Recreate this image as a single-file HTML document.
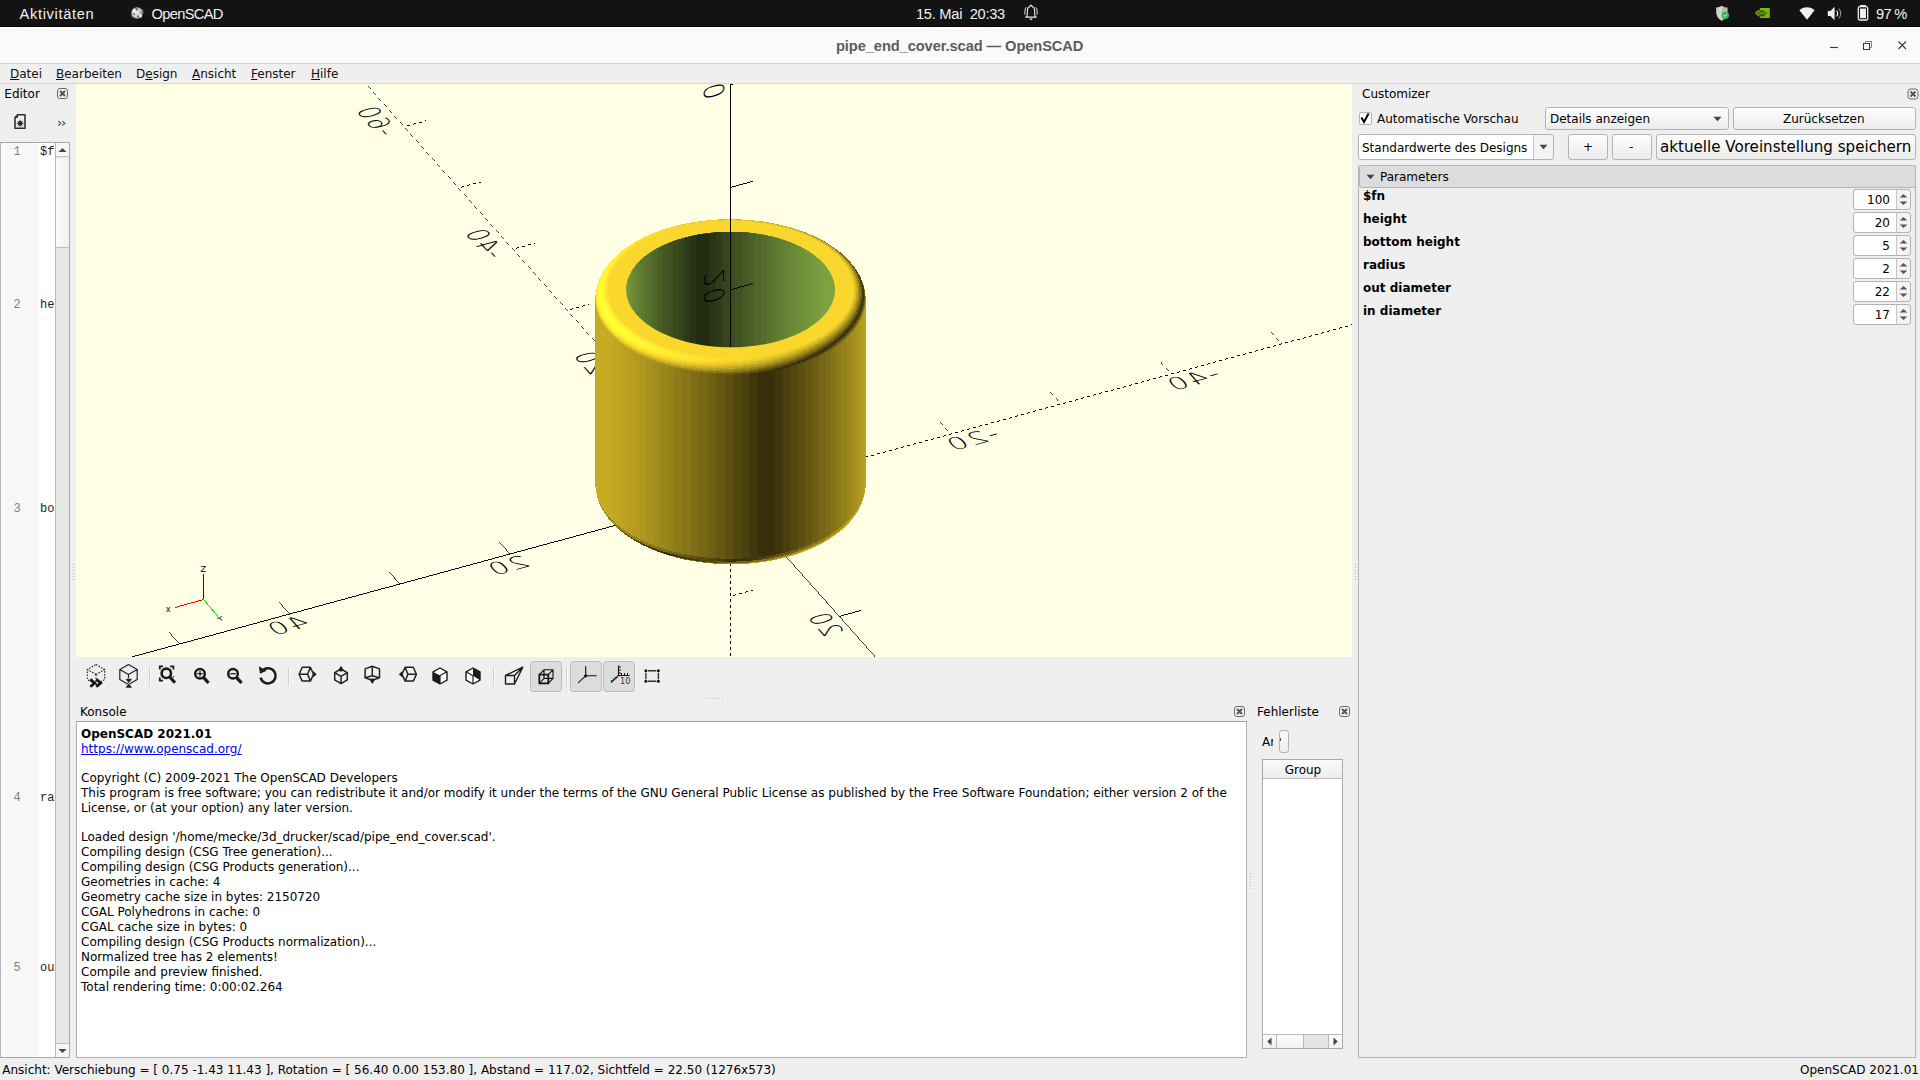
<!DOCTYPE html>
<html lang="de">
<head>
<meta charset="utf-8">
<title>pipe_end_cover.scad — OpenSCAD</title>
<style>
*{box-sizing:border-box;margin:0;padding:0}
html,body{width:1920px;height:1080px;overflow:hidden;background:#efefef;color:#000}
body{position:relative;font-family:"DejaVu Sans","Liberation Sans",sans-serif;font-size:12px}
.abs{position:absolute}
.ub{font-family:"Liberation Sans","DejaVu Sans",sans-serif}
.dv{font-family:"DejaVu Sans","Liberation Sans",sans-serif}
.mono{font-family:"Liberation Mono","DejaVu Sans Mono",monospace}
#topbar{left:0;top:0;width:1920px;height:27px;background:#131313;color:#f2f2f2;border-bottom:1px solid #000}
#titlebar{left:0;top:27px;width:1920px;height:37px;background:#fafafa;border-top:1px solid #fff;border-bottom:1px solid #d4d4d4}
#menubar{left:0;top:64px;width:1920px;height:20px;background:#efefef;border-bottom:1px solid #d6d6d6}
#viewport{left:76px;top:84px;width:1276px;height:573px;background:#ffffe5;overflow:hidden}
#statusbar{left:0;top:1058px;width:1920px;height:22px;background:#efefef}

.t{position:absolute;white-space:pre;line-height:1}
#topbar .t{color:#f0f0f0;font-size:14.67px;top:6.500px}
#titlebar .title{color:#5c5c5c;font-weight:bold;font-size:14.67px;top:11px}
#menubar .t{font-size:12px;top:4px;color:#111;font-family:"DejaVu Sans","Liberation Sans",sans-serif}
#menubar u{text-decoration:underline;text-underline-offset:1px}
.ln{left:12.500px;color:#808080}
.cd{left:39px;color:#1e1e1e}
.btn{border:1px solid #b3b3b3;border-radius:3px;background:linear-gradient(#fdfdfd,#ececec)}
.pl{font-weight:bold;font-size:12px}
.sv{font-size:12px}
.spin{width:58px;height:21px;border:1px solid #b3b3b3;border-radius:3px;background:linear-gradient(90deg,#fff 0,#fff 43px,#f3f3f3 43px,#f3f3f3 100%)}
#tb1{letter-spacing:.66px;transform:translateX(1.5px)}
#tb2{letter-spacing:-.68px;transform:translateX(.5px)}
#tb3{letter-spacing:-.28px}
#tb4{letter-spacing:-.67px}
#ttl{letter-spacing:-.09px}
</style>
</head>
<body>
<div id="topbar" class="abs ub">
<span class="t" id="tb1" style="left:18px">Aktivitäten</span>
<svg class="abs" style="left:129px;top:5px" width="16" height="16" viewBox="0 0 16 16"><defs><radialGradient id="gsph" cx="0.45" cy="0.45" r="0.6"><stop offset="0" stop-color="#e6e6e6"/><stop offset="0.7" stop-color="#c4c4c4"/><stop offset="1" stop-color="#8e8e8e"/></radialGradient></defs><ellipse cx="5.400" cy="10.600" rx="4" ry="2.600" fill="#5a5a5a" opacity=".55"/><ellipse cx="11.400" cy="6.400" rx="3.600" ry="3" fill="#6a6a6a" opacity=".5"/><circle cx="8.100" cy="8" r="5.800" fill="url(#gsph)"/><ellipse cx="7.300" cy="3.900" rx="1.700" ry="1.500" fill="#555" opacity=".8"/><ellipse cx="4.900" cy="8.900" rx="1.200" ry="1.100" fill="#777" opacity=".7"/><ellipse cx="9.400" cy="11.600" rx="1.300" ry="1" fill="#444" opacity=".8"/><ellipse cx="12.300" cy="7.600" rx="1.100" ry="1.600" fill="#888" opacity=".8"/><ellipse cx="11.600" cy="11" rx="1.600" ry="1.700" fill="#fff" opacity=".75"/><ellipse cx="5.400" cy="5.600" rx="1.800" ry="2" fill="#fff" opacity=".7"/></svg>
<span class="t" id="tb2" style="left:151px">OpenSCAD</span>
<span class="t" id="tb3" style="left:916px">15. Mai  20:33</span>
<svg class="abs" style="left:1023px;top:4px" width="16" height="18" viewBox="0 0 16 18"><path d="M8 1.400c-.6 0-1.100.4-1.100 1C5 3 4.300 4.800 4.300 6.900v3.500c0 1-.5 1.900-1.500 2.700h10.400c-1-.8-1.500-1.700-1.500-2.700V6.900c0-2.100-.7-3.900-2.600-4.500 0-.6-.5-1-1.100-1z" fill="none" stroke="#f0f0f0" stroke-width="1.100" stroke-linejoin="round"/><path d="M3.300 3.200C2.300 4.300 1.900 5.600 1.900 7.200v3.600M12.700 3.200c1 1.100 1.400 2.400 1.400 4v3.600" fill="none" stroke="#f0f0f0" stroke-width=".9"/><path d="M6.200 14.600h3.600L8 16.400z" fill="#f0f0f0"/></svg>
<svg class="abs" style="left:1714px;top:5px" width="17" height="17" viewBox="0 0 17 17"><path d="M8 .8c-1.600 1.100-3.400 1.700-5.600 1.800v5c0 3.700 2.200 6.600 5.600 8.200 3.400-1.600 5.600-4.500 5.600-8.200v-5C11.400 2.500 9.600 1.900 8 .8z" fill="#b9b9b9"/><path d="M8 .8v15c-3.400-1.600-5.600-4.500-5.600-8.200v-5C4.600 2.500 6.400 1.900 8 .8z" fill="#d2d2d2"/><circle cx="11.300" cy="10.200" r="3.700" fill="#32b85c"/><path d="M9.600 10.200l1.200 1.200 2.200-2.300" fill="none" stroke="#fff" stroke-width="1"/></svg>
<svg class="abs" style="left:1754px;top:7px" width="17" height="12" viewBox="0 0 17 12"><path d="M6 1h9.800v10H6z" fill="#76b900"/><path d="M1 6C2.800 3.400 5.400 2.300 8.400 2.500L8.400 9.600C5.400 9.900 2.800 8.700 1 6z" fill="#76b900"/><path d="M3.200 6.100C4.400 4.500 6 3.700 8 3.800M8 5c-1.200 0-2.100.5-2.700 1.300.7 1 1.600 1.500 2.700 1.400 1.100-.1 1.900-.6 2.500-1.400M8 3.800c2 .1 3.400 1 4.400 2.600C11.200 8 9.800 8.800 8 8.900 5.900 9 4.300 8 3.200 6.100M8 5c.9.100 1.500.5 2 1.200" fill="none" stroke="#131313" stroke-width=".75"/></svg>
<svg class="abs" style="left:1798px;top:6px" width="18" height="15" viewBox="0 0 18 15"><path d="M9 13.800L1.400 4.300C3.400 2.400 6 1.300 9 1.300s5.600 1.100 7.600 3z" fill="#f0f0f0"/></svg>
<svg class="abs" style="left:1826px;top:5px" width="18" height="17" viewBox="0 0 18 17"><path d="M1.800 6h2.600L8.600 1.800v13.400L4.400 11H1.800z" fill="#f0f0f0"/><path d="M10.600 5.600c1.500 1.500 1.500 4.300 0 5.800" fill="none" stroke="#f0f0f0" stroke-width="1.200"/><path d="M12.800 3.600c2.600 2.600 2.600 7.200 0 9.800" fill="none" stroke="#8c8c8c" stroke-width="1.100"/></svg>
<svg class="abs" style="left:1856px;top:4px" width="14" height="18" viewBox="0 0 14 18"><rect x="4.200" y="1" width="5.600" height="2" fill="#f0f0f0"/><rect x="2.300" y="2.600" width="9.400" height="13.400" rx="1.600" fill="none" stroke="#f0f0f0" stroke-width="1.300"/><rect x="4" y="4.600" width="6" height="9.600" fill="#f0f0f0"/></svg>
<span class="t" id="tb4" style="left:1876px">97 %</span>
</div>
<div id="titlebar" class="abs ub">
<span class="t title" id="ttl" style="left:836px">pipe_end_cover.scad — OpenSCAD</span>
<svg class="abs" style="left:1826px;top:7px" width="84" height="20" viewBox="0 0 84 20"><g stroke="#3b3b3b" stroke-width="1.100" fill="none"><path d="M4 12.500h8"/><path d="M37.500 8.500h6v6h-6z"/><path d="M39.500 8.500v-2h6v6h-2"  stroke="#8a8a8a"/><path d="M72.500 6.500l7.500 7.500M80 6.500l-7.500 7.500"/></g></svg>
</div>
<div id="menubar" class="abs ub">
<span class="t" id="m1" style="left:10px"><u>D</u>atei</span>
<span class="t" id="m2" style="left:56px"><u>B</u>earbeiten</span>
<span class="t" id="m3" style="left:136px">D<u>e</u>sign</span>
<span class="t" id="m4" style="left:192px"><u>A</u>nsicht</span>
<span class="t" id="m5" style="left:251px"><u>F</u>enster</span>
<span class="t" id="m6" style="left:311px"><u>H</u>ilfe</span>
</div>
<div id="editor" class="abs" style="left:0;top:84px;width:76px;height:974px">
<span class="t dv" id="edt" style="left:4.300px;top:4px;font-size:12px">Editor</span>
<svg class="abs" style="left:56px;top:3px" width="13" height="13" viewBox="0 0 13 13"><rect x="1.500" y="1.500" width="10" height="10" rx="2.500" fill="#f1f1f1" stroke="#666" stroke-width="1"/><path d="M4 4l5 5M9 4l-5 5" stroke="#555" stroke-width="2"/></svg>
<svg class="abs" style="left:13px;top:29px" width="15" height="18" viewBox="0 0 15 18"><path d="M4.800 1.800h7.200v13.400H2V4.600z" fill="none" stroke="#2a2a2a" stroke-width="1.500" stroke-linejoin="round"/><path d="M2 4.800h3V1.800z" fill="#2a2a2a"/><circle cx="7.200" cy="10.400" r="2.300" fill="#2a2a2a"/><path d="M7.200 6.900v7M3.700 10.400h7M4.700 7.900l5 5M9.700 7.900l-5 5" stroke="#2a2a2a" stroke-width=".8"/></svg>
<span class="t dv" style="left:57px;top:31.500px;font-size:13px;color:#333;letter-spacing:-1.200px">››</span>
<div class="abs" style="left:0;top:58px;width:70px;height:916px;border:1px solid #a9a9a9;border-left-color:#b5b5b5;background:#fff">
<div class="abs" style="left:0;top:0;width:37px;height:914px;background:#f7f7f7"></div>
<div class="abs mono" style="left:0;top:0;width:55px;height:914px;font-size:12px;color:#222">
<span class="t ln" style="top:3px">1</span><span class="t cd" style="top:3px">$f</span>
<span class="t ln" style="top:156px">2</span><span class="t cd" style="top:156px">he</span>
<span class="t ln" style="top:360px">3</span><span class="t cd" style="top:360px">bo</span>
<span class="t ln" style="top:649px">4</span><span class="t cd" style="top:649px">ra</span>
<span class="t ln" style="top:819px">5</span><span class="t cd" style="top:819px">ou</span>
</div>
<div class="abs" style="left:54px;top:0;width:14px;height:914px;background:#e6e6e6;border-left:1px solid #bababa">
<div class="abs" style="left:0;top:0;width:13px;height:14px;background:#f6f6f6;border-bottom:1px solid #c2c2c2"></div>
<svg class="abs" style="left:2px;top:4px" width="9" height="6" viewBox="0 0 9 6"><path d="M0.500 5L4.500 1l4 4z" fill="#444"/></svg>
<div class="abs" style="left:0;top:15px;width:13px;height:90px;background:linear-gradient(90deg,#fbfbfb,#f0f0f0);border-bottom:1px solid #bdbdbd"></div>
<div class="abs" style="left:0;top:900px;width:13px;height:14px;background:#f6f6f6;border-top:1px solid #c2c2c2"></div>
<svg class="abs" style="left:2px;top:905px" width="9" height="6" viewBox="0 0 9 6"><path d="M0.500 1L4.500 5l4-4z" fill="#444"/></svg>
</div>
</div>
</div>
<div id="viewport" class="abs"><svg class="abs" style="left:0;top:0" width="1276" height="573" viewBox="76 84 1276 573"><defs><clipPath id="holeclip"><polygon points="636.8,314.9 639.9,318.1 643.4,321.2 647.2,324.2 651.3,327 655.7,329.7 660.4,332.3 665.4,334.6 670.7,336.8 676.2,338.8 681.9,340.6 687.8,342.2 693.9,343.6 700.1,344.8 706.4,345.7 712.9,346.5 719.4,347 725.9,347.3 732.5,347.3 739,347.2 745.5,346.8 752,346.1 758.4,345.3 764.6,344.2 770.8,342.9 776.7,341.4 782.5,339.7 788.1,337.8 793.5,335.7 798.6,333.4 803.4,331 808,328.4 812.2,325.6 816.1,322.7 819.7,319.7 823,316.5 825.8,313.2 828.3,309.9 830.4,306.4 832.1,302.9 833.5,299.3 834.4,295.7 834.9,292.1 834.9,288.5 834.6,284.8 833.9,281.2 832.7,277.6 831.2,274.1 829.2,270.6 826.9,267.2 824.2,263.9 821.1,260.7 817.6,257.6 813.8,254.6 809.7,251.8 805.3,249.1 800.6,246.5 795.6,244.2 790.3,242 784.8,240 779.1,238.2 773.2,236.6 767.1,235.2 760.9,234 754.6,233.1 748.1,232.3 741.6,231.8 735.1,231.5 728.5,231.5 722,231.6 715.5,232 709,232.7 702.6,233.5 696.4,234.6 690.2,235.9 684.3,237.4 678.5,239.1 672.9,241 667.5,243.1 662.4,245.4 657.6,247.8 653,250.4 648.8,253.2 644.9,256.1 641.3,259.1 638,262.3 635.2,265.6 632.7,268.9 630.6,272.4 628.9,275.9 627.5,279.5 626.6,283.1 626.1,286.7 626.1,290.3 626.4,294 627.1,297.6 628.3,301.2 629.8,304.7 631.8,308.2 634.1,311.6"/></clipPath></defs><g stroke="#000" stroke-width="1" shape-rendering="crispEdges"><line x1="730.5" y1="494" x2="-40.9" y2="704" stroke-width="0.975"/><line x1="730.5" y1="494" x2="1501.9" y2="284" stroke-dasharray="3.109 3.109" stroke-dashoffset="3.109" stroke-width="0.975"/><line x1="730.5" y1="494" x2="1111.3" y2="922.4" stroke-width="0.757"/><line x1="730.5" y1="494" x2="349.7" y2="65.6" stroke-dasharray="4.014 4.014" stroke-dashoffset="4.014" stroke-width="0.757"/><line x1="730.5" y1="494" x2="730.5" y2="1210.1" stroke-dasharray="3 3" stroke-dashoffset="3"/><line x1="620.3" y1="524" x2="609.4" y2="511.8" stroke-width="0.757"/><line x1="784.9" y1="555.2" x2="806.9" y2="549.2" stroke-width="0.975"/><line x1="840.7" y1="464" x2="829.8" y2="451.8" stroke-dasharray="4.014 4.014" stroke-dashoffset="4.014" stroke-width="0.757"/><line x1="676.1" y1="432.8" x2="698.1" y2="426.8" stroke-dasharray="3.109 3.109" stroke-dashoffset="3.109" stroke-width="0.975"/><line x1="730.5" y1="596.3" x2="752.5" y2="590.3" stroke-dasharray="3.109 3.109" stroke-dashoffset="3.109" stroke-width="0.975"/><line x1="510.1" y1="554" x2="499.2" y2="541.8" stroke-width="0.757"/><line x1="839.3" y1="616.4" x2="861.3" y2="610.4" stroke-width="0.975"/><line x1="950.9" y1="434" x2="940" y2="421.8" stroke-dasharray="4.014 4.014" stroke-dashoffset="4.014" stroke-width="0.757"/><line x1="621.7" y1="371.6" x2="643.7" y2="365.6" stroke-dasharray="3.109 3.109" stroke-dashoffset="3.109" stroke-width="0.975"/><line x1="730.5" y1="698.6" x2="752.5" y2="692.6" stroke-dasharray="3.109 3.109" stroke-dashoffset="3.109" stroke-width="0.975"/><line x1="399.9" y1="584" x2="389" y2="571.8" stroke-width="0.757"/><line x1="893.7" y1="677.6" x2="915.7" y2="671.6" stroke-width="0.975"/><line x1="1061.1" y1="404" x2="1050.2" y2="391.8" stroke-dasharray="4.014 4.014" stroke-dashoffset="4.014" stroke-width="0.757"/><line x1="567.3" y1="310.4" x2="589.3" y2="304.4" stroke-dasharray="3.109 3.109" stroke-dashoffset="3.109" stroke-width="0.975"/><line x1="730.5" y1="800.9" x2="752.5" y2="794.9" stroke-dasharray="3.109 3.109" stroke-dashoffset="3.109" stroke-width="0.975"/><line x1="289.7" y1="614" x2="278.8" y2="601.8" stroke-width="0.757"/><line x1="948.1" y1="738.8" x2="970.1" y2="732.8" stroke-width="0.975"/><line x1="1171.3" y1="374" x2="1160.4" y2="361.8" stroke-dasharray="4.014 4.014" stroke-dashoffset="4.014" stroke-width="0.757"/><line x1="512.9" y1="249.2" x2="534.9" y2="243.2" stroke-dasharray="3.109 3.109" stroke-dashoffset="3.109" stroke-width="0.975"/><line x1="730.5" y1="903.2" x2="752.5" y2="897.2" stroke-dasharray="3.109 3.109" stroke-dashoffset="3.109" stroke-width="0.975"/><line x1="179.5" y1="644" x2="168.6" y2="631.8" stroke-width="0.757"/><line x1="1002.5" y1="800" x2="1024.5" y2="794" stroke-width="0.975"/><line x1="1281.5" y1="344" x2="1270.6" y2="331.8" stroke-dasharray="4.014 4.014" stroke-dashoffset="4.014" stroke-width="0.757"/><line x1="458.5" y1="188" x2="480.5" y2="182" stroke-dasharray="3.109 3.109" stroke-dashoffset="3.109" stroke-width="0.975"/><line x1="730.5" y1="1005.5" x2="752.5" y2="999.5" stroke-dasharray="3.109 3.109" stroke-dashoffset="3.109" stroke-width="0.975"/><line x1="69.3" y1="674" x2="58.4" y2="661.8" stroke-width="0.757"/><line x1="1056.9" y1="861.2" x2="1078.9" y2="855.2" stroke-width="0.975"/><line x1="1391.7" y1="314" x2="1380.8" y2="301.8" stroke-dasharray="4.014 4.014" stroke-dashoffset="4.014" stroke-width="0.757"/><line x1="404.1" y1="126.8" x2="426.1" y2="120.8" stroke-dasharray="3.109 3.109" stroke-dashoffset="3.109" stroke-width="0.975"/><line x1="730.5" y1="1107.8" x2="752.5" y2="1101.8" stroke-dasharray="3.109 3.109" stroke-dashoffset="3.109" stroke-width="0.975"/></g><g font-family="'DejaVu Sans','Liberation Sans',sans-serif" font-weight="200" font-size="10" letter-spacing="0.6" fill="#000"><text transform="matrix(-2.755 0.75 1.36 1.53 512.4 570.9)" text-anchor="middle">20</text><text transform="matrix(-2.755 0.75 1.36 1.53 977.1 444.6)" text-anchor="middle">-20</text><text transform="matrix(-2.755 0.75 1.36 1.53 292 630.9)" text-anchor="middle">40</text><text transform="matrix(-2.755 0.75 1.36 1.53 1197.5 384.6)" text-anchor="middle">-40</text><text transform="matrix(-2.755 0.75 1.36 1.53 71.6 690.9)" text-anchor="middle">60</text><text transform="matrix(-2.755 0.75 1.36 1.53 1417.9 324.6)" text-anchor="middle">-60</text><text transform="matrix(-1.36 -1.53 -2.755 0.75 815.6 626.5)" text-anchor="middle">20</text><text transform="matrix(-1.36 -1.53 -2.755 0.75 584.4 368.1)" text-anchor="middle">-20</text><text transform="matrix(-1.36 -1.53 -2.755 0.75 924.4 748.9)" text-anchor="middle">40</text><text transform="matrix(-1.36 -1.53 -2.755 0.75 475.6 245.7)" text-anchor="middle">-40</text><text transform="matrix(-1.36 -1.53 -2.755 0.75 1033.2 871.3)" text-anchor="middle">60</text><text transform="matrix(-1.36 -1.53 -2.755 0.75 366.8 123.3)" text-anchor="middle">-60</text></g><g shape-rendering="crispEdges"><polygon points="609.3,516.8 613.3,520.9 613.8,523.9 609.8,519.8" fill="#a38c1d"/><polygon points="613.3,520.9 617.7,524.9 618.2,527.9 613.8,523.9" fill="#a08a1c"/><polygon points="617.7,524.9 622.6,528.8 623.1,531.8 618.2,527.9" fill="#9e881c"/><polygon points="622.6,528.8 628,532.5 628.4,535.4 623.1,531.8" fill="#9a851b"/><polygon points="628,532.5 633.7,536 634.1,538.9 628.4,535.4" fill="#96821b"/><polygon points="633.7,536 639.8,539.2 640.2,542.1 634.1,538.9" fill="#927e1a"/><polygon points="639.8,539.2 646.3,542.3 646.7,545.2 640.2,542.1" fill="#8d7a19"/><polygon points="646.3,542.3 653.1,545.1 653.4,548 646.7,545.2" fill="#877518"/><polygon points="653.1,545.1 660.2,547.7 660.5,550.6 653.4,548" fill="#827017"/><polygon points="660.2,547.7 667.6,550 667.9,552.9 660.5,550.6" fill="#7b6a16"/><polygon points="667.6,550 675.2,552.1 675.5,555 667.9,552.9" fill="#756515"/><polygon points="675.2,552.1 683.1,553.9 683.3,556.8 675.5,555" fill="#6d5f13"/><polygon points="683.1,553.9 691.1,555.4 691.3,558.3 683.3,556.8" fill="#665812"/><polygon points="691.1,555.4 699.3,556.7 699.5,559.5 691.3,558.3" fill="#5e5111"/><polygon points="699.3,556.7 707.7,557.6 707.8,560.5 699.5,559.5" fill="#564a0f"/><polygon points="707.7,557.6 716.1,558.3 716.1,561.1 707.8,560.5" fill="#4e430e"/><polygon points="716.1,558.3 724.5,558.7 724.6,561.5 716.1,561.1" fill="#453c0c"/><polygon points="724.5,558.7 733,558.7 733,561.6 724.6,561.5" fill="#3c340b"/><polygon points="733,558.7 741.5,558.5 741.5,561.3 733,561.6" fill="#332c09"/><polygon points="741.5,558.5 750,558 749.9,560.8 741.5,561.3" fill="#39320a"/><polygon points="750,558 758.3,557.2 758.2,560 749.9,560.8" fill="#43390c"/><polygon points="758.3,557.2 766.6,556.1 766.4,558.9 758.2,560" fill="#4c410d"/><polygon points="766.6,556.1 774.7,554.7 774.5,557.5 766.4,558.9" fill="#55490f"/><polygon points="774.7,554.7 782.6,553 782.4,555.9 774.5,557.5" fill="#5e5111"/><polygon points="782.6,553 790.3,551.1 790.1,554 782.4,555.9" fill="#675912"/><polygon points="790.3,551.1 797.8,548.9 797.5,551.8 790.1,554" fill="#716114"/><polygon points="797.8,548.9 805.1,546.4 804.7,549.3 797.5,551.8" fill="#7a6915"/><polygon points="805.1,546.4 812,543.7 811.6,546.6 804.7,549.3" fill="#827117"/><polygon points="812,543.7 818.6,540.8 818.2,543.7 811.6,546.6" fill="#8b7819"/><polygon points="818.6,540.8 824.9,537.6 824.5,540.5 818.2,543.7" fill="#937f1a"/><polygon points="824.9,537.6 830.8,534.2 830.3,537.2 824.5,540.5" fill="#9c861b"/><polygon points="830.8,534.2 836.3,530.6 835.8,533.6 830.3,537.2" fill="#a38d1d"/><polygon points="836.3,530.6 841.3,526.9 840.8,529.8 835.8,533.6" fill="#ab941e"/><polygon points="841.3,526.9 846,522.9 845.5,525.9 840.8,529.8" fill="#b29a1f"/><polygon points="846,522.9 850.2,518.8 849.6,521.8 845.5,525.9" fill="#b9a021"/><polygon points="850.2,518.8 853.9,514.6 853.3,517.6 849.6,521.8" fill="#bfa522"/><polygon points="853.9,514.6 857.1,510.3 856.5,513.3 853.3,517.6" fill="#c5aa23"/><polygon points="857.1,510.3 859.8,505.8 859.3,508.9 856.5,513.3" fill="#cbaf24"/><polygon points="859.8,505.8 862,501.3 861.5,504.3 859.3,508.9" fill="#d0b325"/><polygon points="862,501.3 863.7,496.6 863.1,499.7 861.5,504.3" fill="#d4b725"/><polygon points="863.7,496.6 864.9,492 864.3,495.1 863.1,499.7" fill="#d8bb26"/><polygon points="595.8,489.7 596.7,494.4 597.3,497.5 596.4,492.8" fill="#a48e1d"/><polygon points="596.7,494.4 598.2,499 598.8,502.1 597.3,497.5" fill="#a58f1d"/><polygon points="598.2,499 600.2,503.6 600.8,506.6 598.8,502.1" fill="#a68f1d"/><polygon points="600.2,503.6 602.7,508.1 603.3,511.1 600.8,506.6" fill="#a68f1d"/><polygon points="602.7,508.1 605.8,512.5 606.3,515.5 603.3,511.1" fill="#a58f1d"/><polygon points="605.8,512.5 609.3,516.8 609.8,519.8 606.3,515.5" fill="#a48e1d"/><polygon points="609.8,519.8 613.8,523.9 615.3,526.3 611.4,522.2" fill="#594d10"/><polygon points="613.8,523.9 618.2,527.9 619.7,530.2 615.3,526.3" fill="#574b0f"/><polygon points="618.2,527.9 623.1,531.8 624.5,534 619.7,530.2" fill="#55490f"/><polygon points="623.1,531.8 628.4,535.4 629.8,537.6 624.5,534" fill="#52460e"/><polygon points="628.4,535.4 634.1,538.9 635.4,541.1 629.8,537.6" fill="#4e430e"/><polygon points="634.1,538.9 640.2,542.1 641.4,544.3 635.4,541.1" fill="#4a400d"/><polygon points="640.2,542.1 646.7,545.2 647.8,547.3 641.4,544.3" fill="#463c0c"/><polygon points="646.7,545.2 653.4,548 654.4,550.1 647.8,547.3" fill="#41380b"/><polygon points="653.4,548 660.5,550.6 661.4,552.6 654.4,550.1" fill="#3b330b"/><polygon points="660.5,550.6 667.9,552.9 668.7,554.9 661.4,552.6" fill="#362e0a"/><polygon points="667.9,552.9 675.5,555 676.2,556.9 668.7,554.9" fill="#342d09"/><polygon points="675.5,555 683.3,556.8 683.9,558.7 676.2,556.9" fill="#3a320a"/><polygon points="683.3,556.8 691.3,558.3 691.8,560.2 683.9,558.7" fill="#41380b"/><polygon points="691.3,558.3 699.5,559.5 699.9,561.4 691.8,560.2" fill="#483e0d"/><polygon points="699.5,559.5 707.8,560.5 708.1,562.4 699.9,561.4" fill="#4f450e"/><polygon points="707.8,560.5 716.1,561.1 716.3,563 708.1,562.4" fill="#574b0f"/><polygon points="716.1,561.1 724.6,561.5 724.6,563.4 716.3,563" fill="#5f5211"/><polygon points="724.6,561.5 733,561.6 733,563.4 724.6,563.4" fill="#675912"/><polygon points="733,561.6 741.5,561.3 741.3,563.2 733,563.4" fill="#6f6014"/><polygon points="741.5,561.3 749.9,560.8 749.6,562.7 741.3,563.2" fill="#776715"/><polygon points="749.9,560.8 758.2,560 757.8,561.9 749.6,562.7" fill="#7f6e16"/><polygon points="758.2,560 766.4,558.9 765.9,560.8 757.8,561.9" fill="#887518"/><polygon points="766.4,558.9 774.5,557.5 773.9,559.5 765.9,560.8" fill="#907c19"/><polygon points="774.5,557.5 782.4,555.9 781.7,557.8 773.9,559.5" fill="#98831b"/><polygon points="782.4,555.9 790.1,554 789.3,555.9 781.7,557.8" fill="#a18b1c"/><polygon points="790.1,554 797.5,551.8 796.7,553.8 789.3,555.9" fill="#a9921e"/><polygon points="797.5,551.8 804.7,549.3 803.8,551.3 796.7,553.8" fill="#b1991f"/><polygon points="804.7,549.3 811.6,546.6 810.6,548.7 803.8,551.3" fill="#b9a021"/><polygon points="811.6,546.6 818.2,543.7 817.1,545.8 810.6,548.7" fill="#c1a622"/><polygon points="818.2,543.7 824.5,540.5 823.2,542.7 817.1,545.8" fill="#c8ad23"/><polygon points="824.5,540.5 830.3,537.2 829,539.4 823.2,542.7" fill="#d0b325"/><polygon points="830.3,537.2 835.8,533.6 834.4,535.8 829,539.4" fill="#d7b926"/><polygon points="835.8,533.6 840.8,529.8 839.4,532.1 834.4,535.8" fill="#ddbf27"/><polygon points="840.8,529.8 845.5,525.9 844,528.3 839.4,532.1" fill="#e4c528"/><polygon points="845.5,525.9 849.6,521.8 848.1,524.2 844,528.3" fill="#eaca29"/><polygon points="849.6,521.8 853.3,517.6 851.7,520.1 848.1,524.2" fill="#f0cf2a"/><polygon points="853.3,517.6 856.5,513.3 854.9,515.8 851.7,520.1" fill="#f5d42b"/><polygon points="603.3,511.1 606.3,515.5 607.9,518 605,513.7" fill="#5c4f10"/><polygon points="606.3,515.5 609.8,519.8 611.4,522.2 607.9,518" fill="#5b4e10"/><polygon points="629.8,537.6 635.4,541.1 637.3,542.3 631.8,538.9" fill="#605311"/><polygon points="635.4,541.1 641.4,544.3 643.2,545.4 637.3,542.3" fill="#645612"/><polygon points="641.4,544.3 647.8,547.3 649.5,548.4 643.2,545.4" fill="#675912"/><polygon points="647.8,547.3 654.4,550.1 656,551.1 649.5,548.4" fill="#6b5c13"/><polygon points="654.4,550.1 661.4,552.6 662.8,553.6 656,551.1" fill="#6f6014"/><polygon points="661.4,552.6 668.7,554.9 670,555.8 662.8,553.6" fill="#746414"/><polygon points="668.7,554.9 676.2,556.9 677.3,557.8 670,555.8" fill="#796815"/><polygon points="676.2,556.9 683.9,558.7 684.9,559.6 677.3,557.8" fill="#7e6d16"/><polygon points="683.9,558.7 691.8,560.2 692.6,561 684.9,559.6" fill="#837117"/><polygon points="691.8,560.2 699.9,561.4 700.5,562.2 692.6,561" fill="#897618"/><polygon points="699.9,561.4 708.1,562.4 708.5,563.1 700.5,562.2" fill="#8e7b19"/><polygon points="708.1,562.4 716.3,563 716.6,563.8 708.5,563.1" fill="#94801a"/><polygon points="716.3,563 724.6,563.4 724.8,564.1 716.6,563.8" fill="#9b851b"/><polygon points="724.6,563.4 733,563.4 732.9,564.2 724.8,564.1" fill="#a18b1c"/><polygon points="733,563.4 741.3,563.2 741.1,564 732.9,564.2" fill="#a7901e"/><polygon points="741.3,563.2 749.6,562.7 749.2,563.5 741.1,564" fill="#ae961f"/><polygon points="749.6,562.7 757.8,561.9 757.3,562.7 749.2,563.5" fill="#b49c20"/><polygon points="757.8,561.9 765.9,560.8 765.2,561.6 757.3,562.7" fill="#bba121"/><polygon points="765.9,560.8 773.9,559.5 773,560.3 765.2,561.6" fill="#c2a722"/><polygon points="773.9,559.5 781.7,557.8 780.7,558.7 773,560.3" fill="#c8ad23"/><polygon points="781.7,557.8 789.3,555.9 788.1,556.8 780.7,558.7" fill="#cfb325"/><polygon points="789.3,555.9 796.7,553.8 795.3,554.7 788.1,556.8" fill="#d5b826"/><polygon points="796.7,553.8 803.8,551.3 802.3,552.4 795.3,554.7" fill="#dcbe27"/><polygon points="803.8,551.3 810.6,548.7 808.9,549.7 802.3,552.4" fill="#e2c328"/><polygon points="810.6,548.7 817.1,545.8 815.3,546.9 808.9,549.7" fill="#e8c929"/><polygon points="817.1,545.8 823.2,542.7 821.3,543.9 815.3,546.9" fill="#eece2a"/><polygon points="823.2,542.7 829,539.4 827,540.6 821.3,543.9" fill="#f4d32b"/><polygon points="609.3,516.8 613.3,520.9 613.3,336.8 609.3,332.6" fill="#c4a923"/><polygon points="613.3,520.9 617.7,524.9 617.7,340.8 613.3,336.8" fill="#c1a722"/><polygon points="617.7,524.9 622.6,528.8 622.6,344.7 617.7,340.8" fill="#bea422"/><polygon points="622.6,528.8 628,532.5 628,348.3 622.6,344.7" fill="#bba121"/><polygon points="628,532.5 633.7,536 633.7,351.8 628,348.3" fill="#b79e20"/><polygon points="633.7,536 639.8,539.2 639.8,355.1 633.7,351.8" fill="#b39a20"/><polygon points="639.8,539.2 646.3,542.3 646.3,358.2 639.8,355.1" fill="#ae961f"/><polygon points="646.3,542.3 653.1,545.1 653.1,361 646.3,358.2" fill="#a8911e"/><polygon points="653.1,545.1 660.2,547.7 660.2,363.6 653.1,361" fill="#a28c1d"/><polygon points="660.2,547.7 667.6,550 667.6,365.9 660.2,363.6" fill="#9c871c"/><polygon points="667.6,550 675.2,552.1 675.2,368 667.6,365.9" fill="#95811a"/><polygon points="675.2,552.1 683.1,553.9 683.1,369.8 675.2,368" fill="#8e7a19"/><polygon points="683.1,553.9 691.1,555.4 691.1,371.3 683.1,369.8" fill="#867418"/><polygon points="691.1,555.4 699.3,556.7 699.3,372.5 691.1,371.3" fill="#7e6d16"/><polygon points="699.3,556.7 707.7,557.6 707.7,373.5 699.3,372.5" fill="#766615"/><polygon points="707.7,557.6 716.1,558.3 716.1,374.2 707.7,373.5" fill="#6e5f13"/><polygon points="716.1,558.3 724.5,558.7 724.5,374.5 716.1,374.2" fill="#655712"/><polygon points="724.5,558.7 733,558.7 733,374.6 724.5,374.5" fill="#5c4f10"/><polygon points="733,558.7 741.5,558.5 741.5,374.4 733,374.6" fill="#53480f"/><polygon points="741.5,558.5 750,558 750,373.9 741.5,374.4" fill="#4a400d"/><polygon points="750,558 758.3,557.2 758.3,373 750,373.9" fill="#40380b"/><polygon points="758.3,557.2 766.6,556.1 766.6,371.9 758.3,373" fill="#37300a"/><polygon points="766.6,556.1 774.7,554.7 774.7,370.6 766.6,371.9" fill="#362f0a"/><polygon points="774.7,554.7 782.6,553 782.6,368.9 774.7,370.6" fill="#3f370b"/><polygon points="782.6,553 790.3,551.1 790.3,367 782.6,368.9" fill="#493f0d"/><polygon points="790.3,551.1 797.8,548.9 797.8,364.7 790.3,367" fill="#52470e"/><polygon points="797.8,548.9 805.1,546.4 805.1,362.3 797.8,364.7" fill="#5b4e10"/><polygon points="805.1,546.4 812,543.7 812,359.6 805.1,362.3" fill="#645612"/><polygon points="812,543.7 818.6,540.8 818.6,356.6 812,359.6" fill="#6d5e13"/><polygon points="818.6,540.8 824.9,537.6 824.9,353.5 818.6,356.6" fill="#756515"/><polygon points="824.9,537.6 830.8,534.2 830.8,350.1 824.9,353.5" fill="#7d6c16"/><polygon points="830.8,534.2 836.3,530.6 836.3,346.5 830.8,350.1" fill="#857318"/><polygon points="836.3,530.6 841.3,526.9 841.3,342.7 836.3,346.5" fill="#8d7a19"/><polygon points="841.3,526.9 846,522.9 846,338.8 841.3,342.7" fill="#94801a"/><polygon points="846,522.9 850.2,518.8 850.2,334.7 846,338.8" fill="#9b861b"/><polygon points="850.2,518.8 853.9,514.6 853.9,330.5 850.2,334.7" fill="#a18b1d"/><polygon points="853.9,514.6 857.1,510.3 857.1,326.1 853.9,330.5" fill="#a7911e"/><polygon points="857.1,510.3 859.8,505.8 859.8,321.7 857.1,326.1" fill="#ad951f"/><polygon points="859.8,505.8 862,501.3 862,317.1 859.8,321.7" fill="#b29a1f"/><polygon points="862,501.3 863.7,496.6 863.7,312.5 862,317.1" fill="#b79e20"/><polygon points="863.7,496.6 864.9,492 864.9,307.8 863.7,312.5" fill="#bba121"/><polygon points="864.9,492 865.6,487.3 865.6,303.1 864.9,307.8" fill="#bea422"/><polygon points="865.6,487.3 865.7,482.6 865.7,298.4 865.6,303.1" fill="#c1a722"/><polygon points="595.3,485 595.8,489.7 595.8,305.5 595.3,300.8" fill="#c3a923"/><polygon points="595.8,489.7 596.7,494.4 596.7,310.2 595.8,305.5" fill="#c5aa23"/><polygon points="596.7,494.4 598.2,499 598.2,314.9 596.7,310.2" fill="#c6ab23"/><polygon points="598.2,499 600.2,503.6 600.2,319.4 598.2,314.9" fill="#c7ac23"/><polygon points="600.2,503.6 602.7,508.1 602.7,323.9 600.2,319.4" fill="#c7ac23"/><polygon points="602.7,508.1 605.8,512.5 605.8,328.3 602.7,323.9" fill="#c6ab23"/><polygon points="605.8,512.5 609.3,516.8 609.3,332.6 605.8,328.3" fill="#c5aa23"/><polygon points="609.3,332.6 613.3,336.8 613.4,335.4 609.4,331.3" fill="#d0b425"/><polygon points="613.3,336.8 617.7,340.8 617.8,339.4 613.4,335.4" fill="#ceb224"/><polygon points="617.7,340.8 622.6,344.7 622.7,343.3 617.8,339.4" fill="#cbaf24"/><polygon points="622.6,344.7 628,348.3 628,347 622.7,343.3" fill="#c8ac23"/><polygon points="628,348.3 633.7,351.8 633.8,350.4 628,347" fill="#c4a923"/><polygon points="633.7,351.8 639.8,355.1 639.9,353.7 633.8,350.4" fill="#bfa522"/><polygon points="639.8,355.1 646.3,358.2 646.4,356.8 639.9,353.7" fill="#baa121"/><polygon points="646.3,358.2 653.1,361 653.2,359.6 646.4,356.8" fill="#b59c20"/><polygon points="653.1,361 660.2,363.6 660.3,362.2 653.2,359.6" fill="#af971f"/><polygon points="660.2,363.6 667.6,365.9 667.7,364.5 660.3,362.2" fill="#a9921e"/><polygon points="667.6,365.9 675.2,368 675.3,366.6 667.7,364.5" fill="#a28c1d"/><polygon points="675.2,368 683.1,369.8 683.1,368.4 675.3,366.6" fill="#9b851b"/><polygon points="683.1,369.8 691.1,371.3 691.2,369.9 683.1,368.4" fill="#937f1a"/><polygon points="691.1,371.3 699.3,372.5 699.4,371.1 691.2,369.9" fill="#8b7819"/><polygon points="699.3,372.5 707.7,373.5 707.7,372.1 699.4,371.1" fill="#837117"/><polygon points="707.7,373.5 716.1,374.2 716.1,372.8 707.7,372.1" fill="#7b6a16"/><polygon points="716.1,374.2 724.5,374.5 724.5,373.1 716.1,372.8" fill="#726214"/><polygon points="724.5,374.5 733,374.6 733,373.2 724.5,373.1" fill="#695b13"/><polygon points="733,374.6 741.5,374.4 741.5,373 733,373.2" fill="#605311"/><polygon points="741.5,374.4 750,373.9 749.9,372.5 741.5,373" fill="#574b0f"/><polygon points="750,373.9 758.3,373 758.3,371.6 749.9,372.5" fill="#4d430e"/><polygon points="758.3,373 766.6,371.9 766.5,370.5 758.3,371.6" fill="#443b0c"/><polygon points="766.6,371.9 774.7,370.6 774.6,369.2 766.5,370.5" fill="#3b330a"/><polygon points="774.7,370.6 782.6,368.9 782.6,367.5 774.6,369.2" fill="#322b09"/><polygon points="782.6,368.9 790.3,367 790.3,365.6 782.6,367.5" fill="#3b330b"/><polygon points="790.3,367 797.8,364.7 797.8,363.4 790.3,365.6" fill="#453b0c"/><polygon points="797.8,364.7 805.1,362.3 805,360.9 797.8,363.4" fill="#4e430e"/><polygon points="805.1,362.3 812,359.6 811.9,358.2 805,360.9" fill="#574b0f"/><polygon points="812,359.6 818.6,356.6 818.5,355.2 811.9,358.2" fill="#5f5211"/><polygon points="818.6,356.6 824.9,353.5 824.8,352.1 818.5,355.2" fill="#685a12"/><polygon points="824.9,353.5 830.8,350.1 830.7,348.7 824.8,352.1" fill="#706114"/><polygon points="830.8,350.1 836.3,346.5 836.2,345.1 830.7,348.7" fill="#786815"/><polygon points="836.3,346.5 841.3,342.7 841.3,341.4 836.2,345.1" fill="#806e17"/><polygon points="841.3,342.7 846,338.8 845.9,337.4 841.3,341.4" fill="#877418"/><polygon points="846,338.8 850.2,334.7 850.1,333.3 845.9,337.4" fill="#8e7a19"/><polygon points="850.2,334.7 853.9,330.5 853.8,329.1 850.1,333.3" fill="#94801a"/><polygon points="853.9,330.5 857.1,326.1 857,324.8 853.8,329.1" fill="#9a851b"/><polygon points="857.1,326.1 859.8,321.7 859.7,320.3 857,324.8" fill="#a08a1c"/><polygon points="859.8,321.7 862,317.1 861.9,315.8 859.7,320.3" fill="#a58e1d"/><polygon points="862,317.1 863.7,312.5 863.6,311.2 861.9,315.8" fill="#a9921e"/><polygon points="863.7,312.5 864.9,307.8 864.8,306.5 863.6,311.2" fill="#ad961f"/><polygon points="864.9,307.8 865.6,303.1 865.4,301.8 864.8,306.5" fill="#b1991f"/><polygon points="865.6,303.1 865.7,298.4 865.6,297.1 865.4,301.8" fill="#b49b20"/><polygon points="595.4,296.1 595.3,300.8 595.4,299.5 595.6,294.8" fill="#ceb224"/><polygon points="595.3,300.8 595.8,305.5 595.9,304.2 595.4,299.5" fill="#d0b425"/><polygon points="595.8,305.5 596.7,310.2 596.8,308.9 595.9,304.2" fill="#d2b525"/><polygon points="596.7,310.2 598.2,314.9 598.3,313.5 596.8,308.9" fill="#d3b625"/><polygon points="598.2,314.9 600.2,319.4 600.3,318.1 598.3,313.5" fill="#d4b725"/><polygon points="600.2,319.4 602.7,323.9 602.8,322.6 600.3,318.1" fill="#d4b725"/><polygon points="602.7,323.9 605.8,328.3 605.9,327 602.8,322.6" fill="#d3b625"/><polygon points="605.8,328.3 609.3,332.6 609.4,331.3 605.9,327" fill="#d2b525"/><polygon points="609.4,331.3 613.4,335.4 613.6,334 609.7,329.9" fill="#e8c829"/><polygon points="613.4,335.4 617.8,339.4 618.1,338 613.6,334" fill="#e5c629"/><polygon points="617.8,339.4 622.7,343.3 623,341.9 618.1,338" fill="#e3c428"/><polygon points="622.7,343.3 628,347 628.3,345.5 623,341.9" fill="#dfc127"/><polygon points="628,347 633.8,350.4 634,349 628.3,345.5" fill="#dbbd27"/><polygon points="633.8,350.4 639.9,353.7 640.1,352.3 634,349" fill="#d7ba26"/><polygon points="639.9,353.7 646.4,356.8 646.6,355.3 640.1,352.3" fill="#d2b525"/><polygon points="646.4,356.8 653.2,359.6 653.3,358.1 646.6,355.3" fill="#cdb124"/><polygon points="653.2,359.6 660.3,362.2 660.4,360.7 653.3,358.1" fill="#c7ac23"/><polygon points="660.3,362.2 667.7,364.5 667.8,363 660.4,360.7" fill="#c1a622"/><polygon points="667.7,364.5 675.3,366.6 675.4,365.1 667.8,363" fill="#baa121"/><polygon points="675.3,366.6 683.1,368.4 683.2,366.9 675.4,365.1" fill="#b39a20"/><polygon points="683.1,368.4 691.2,369.9 691.3,368.4 683.2,366.9" fill="#ab941e"/><polygon points="691.2,369.9 699.4,371.1 699.4,369.7 691.3,368.4" fill="#a48d1d"/><polygon points="699.4,371.1 707.7,372.1 707.7,370.6 699.4,369.7" fill="#9c861c"/><polygon points="707.7,372.1 716.1,372.8 716.1,371.3 707.7,370.6" fill="#937f1a"/><polygon points="716.1,372.8 724.5,373.1 724.6,371.6 716.1,371.3" fill="#8b7819"/><polygon points="724.5,373.1 733,373.2 733,371.7 724.6,371.6" fill="#827017"/><polygon points="733,373.2 741.5,373 741.5,371.5 733,371.7" fill="#796915"/><polygon points="741.5,373 749.9,372.5 749.9,371 741.5,371.5" fill="#706114"/><polygon points="749.9,372.5 758.3,371.6 758.2,370.2 749.9,371" fill="#675912"/><polygon points="758.3,371.6 766.5,370.5 766.5,369.1 758.2,370.2" fill="#5e5111"/><polygon points="766.5,370.5 774.6,369.2 774.5,367.7 766.5,369.1" fill="#55490f"/><polygon points="774.6,369.2 782.6,367.5 782.4,366 774.5,367.7" fill="#4b410d"/><polygon points="782.6,367.5 790.3,365.6 790.2,364.1 782.4,366" fill="#42390c"/><polygon points="790.3,365.6 797.8,363.4 797.6,361.9 790.2,364.1" fill="#39310a"/><polygon points="797.8,363.4 805,360.9 804.8,359.4 797.6,361.9" fill="#332c09"/><polygon points="805,360.9 811.9,358.2 811.7,356.7 804.8,359.4" fill="#3c340b"/><polygon points="811.9,358.2 818.5,355.2 818.3,353.8 811.7,356.7" fill="#453b0c"/><polygon points="818.5,355.2 824.8,352.1 824.6,350.6 818.3,353.8" fill="#4d420e"/><polygon points="824.8,352.1 830.7,348.7 830.5,347.3 824.6,350.6" fill="#55490f"/><polygon points="830.7,348.7 836.2,345.1 835.9,343.7 830.5,347.3" fill="#5d5010"/><polygon points="836.2,345.1 841.3,341.4 841,339.9 835.9,343.7" fill="#645712"/><polygon points="841.3,341.4 845.9,337.4 845.6,336 841,339.9" fill="#6b5d13"/><polygon points="845.9,337.4 850.1,333.3 849.8,331.9 845.6,336" fill="#726214"/><polygon points="850.1,333.3 853.8,329.1 853.5,327.7 849.8,331.9" fill="#786815"/><polygon points="853.8,329.1 857,324.8 856.7,323.4 853.5,327.7" fill="#7e6d16"/><polygon points="857,324.8 859.7,320.3 859.4,318.9 856.7,323.4" fill="#847217"/><polygon points="859.7,320.3 861.9,315.8 861.6,314.4 859.4,318.9" fill="#897618"/><polygon points="861.9,315.8 863.6,311.2 863.3,309.8 861.6,314.4" fill="#8d7a19"/><polygon points="863.6,311.2 864.8,306.5 864.5,305.2 863.3,309.8" fill="#917d1a"/><polygon points="864.8,306.5 865.4,301.8 865.1,300.5 864.5,305.2" fill="#94801a"/><polygon points="865.4,301.8 865.6,297.1 865.2,295.8 865.1,300.5" fill="#97831b"/><polygon points="865.6,297.1 865.1,292.4 864.8,291.1 865.2,295.8" fill="#9a851b"/><polygon points="865.1,292.4 864.2,287.7 863.9,286.4 864.8,291.1" fill="#9b861b"/><polygon points="596.2,290.1 595.6,294.8 595.9,293.5 596.5,288.8" fill="#e2c328"/><polygon points="595.6,294.8 595.4,299.5 595.8,298.2 595.9,293.5" fill="#e5c628"/><polygon points="595.4,299.5 595.9,304.2 596.2,302.9 595.8,298.2" fill="#e7c829"/><polygon points="595.9,304.2 596.8,308.9 597.1,307.5 596.2,302.9" fill="#e9c929"/><polygon points="596.8,308.9 598.3,313.5 598.6,312.2 597.1,307.5" fill="#eaca29"/><polygon points="598.3,313.5 600.3,318.1 600.6,316.7 598.6,312.2" fill="#ebcb2a"/><polygon points="600.3,318.1 602.8,322.6 603.1,321.2 600.6,316.7" fill="#ebcb2a"/><polygon points="602.8,322.6 605.9,327 606.1,325.6 603.1,321.2" fill="#eaca29"/><polygon points="605.9,327 609.4,331.3 609.7,329.9 606.1,325.6" fill="#e9ca29"/><polygon points="609.7,329.9 613.6,334 614.1,332.6 610.1,328.5" fill="#fcda2d"/><polygon points="613.6,334 618.1,338 618.5,336.6 614.1,332.6" fill="#fad82c"/><polygon points="618.1,338 623,341.9 623.4,340.4 618.5,336.6" fill="#f7d52c"/><polygon points="623,341.9 628.3,345.5 628.7,344.1 623.4,340.4" fill="#f4d32b"/><polygon points="628.3,345.5 634,349 634.4,347.5 628.7,344.1" fill="#f0cf2a"/><polygon points="634,349 640.1,352.3 640.4,350.8 634.4,347.5" fill="#eccc2a"/><polygon points="640.1,352.3 646.6,355.3 646.9,353.8 640.4,350.8" fill="#e7c829"/><polygon points="646.6,355.3 653.3,358.1 653.6,356.6 646.9,353.8" fill="#e2c328"/><polygon points="653.3,358.1 660.4,360.7 660.7,359.2 653.6,356.6" fill="#dcbe27"/><polygon points="660.4,360.7 667.8,363 668,361.5 660.7,359.2" fill="#d6b926"/><polygon points="667.8,363 675.4,365.1 675.6,363.6 668,361.5" fill="#d0b325"/><polygon points="675.4,365.1 683.2,366.9 683.4,365.4 675.6,363.6" fill="#c9ad24"/><polygon points="683.2,366.9 691.3,368.4 691.4,366.9 683.4,365.4" fill="#c2a722"/><polygon points="691.3,368.4 699.4,369.7 699.6,368.1 691.4,366.9" fill="#baa121"/><polygon points="699.4,369.7 707.7,370.6 707.8,369.1 699.6,368.1" fill="#b39a20"/><polygon points="707.7,370.6 716.1,371.3 716.2,369.7 707.8,369.1" fill="#aa931e"/><polygon points="716.1,371.3 724.6,371.6 724.6,370.1 716.2,369.7" fill="#a28c1d"/><polygon points="724.6,371.6 733,371.7 733,370.2 724.6,370.1" fill="#9a851b"/><polygon points="733,371.7 741.5,371.5 741.4,369.9 733,370.2" fill="#917d1a"/><polygon points="741.5,371.5 749.9,371 749.8,369.4 741.4,369.9" fill="#897618"/><polygon points="749.9,371 758.2,370.2 758.1,368.6 749.8,369.4" fill="#806e17"/><polygon points="758.2,370.2 766.5,369.1 766.3,367.5 758.1,368.6" fill="#776715"/><polygon points="766.5,369.1 774.5,367.7 774.4,366.1 766.3,367.5" fill="#6e5f13"/><polygon points="774.5,367.7 782.4,366 782.2,364.5 774.4,366.1" fill="#655712"/><polygon points="782.4,366 790.2,364.1 789.9,362.6 782.2,364.5" fill="#5c5010"/><polygon points="790.2,364.1 797.6,361.9 797.4,360.4 789.9,362.6" fill="#54480f"/><polygon points="797.6,361.9 804.8,359.4 804.5,357.9 797.4,360.4" fill="#4b410d"/><polygon points="804.8,359.4 811.7,356.7 811.4,355.2 804.5,357.9" fill="#42390c"/><polygon points="811.7,356.7 818.3,353.8 818,352.3 811.4,355.2" fill="#3a320a"/><polygon points="818.3,353.8 824.6,350.6 824.2,349.2 818,352.3" fill="#322b09"/><polygon points="824.6,350.6 830.5,347.3 830.1,345.8 824.2,349.2" fill="#39310a"/><polygon points="830.5,347.3 835.9,343.7 835.5,342.3 830.1,345.8" fill="#41380b"/><polygon points="835.9,343.7 841,339.9 840.6,338.5 835.5,342.3" fill="#483e0d"/><polygon points="841,339.9 845.6,336 845.2,334.6 840.6,338.5" fill="#4f440e"/><polygon points="845.6,336 849.8,331.9 849.3,330.5 845.2,334.6" fill="#554a0f"/><polygon points="849.8,331.9 853.5,327.7 853,326.3 849.3,330.5" fill="#5b4f10"/><polygon points="853.5,327.7 856.7,323.4 856.2,322 853,326.3" fill="#615411"/><polygon points="856.7,323.4 859.4,318.9 858.9,317.6 856.2,322" fill="#665812"/><polygon points="859.4,318.9 861.6,314.4 861.1,313.1 858.9,317.6" fill="#6b5d13"/><polygon points="861.6,314.4 863.3,309.8 862.8,308.5 861.1,313.1" fill="#6f6014"/><polygon points="863.3,309.8 864.5,305.2 864,303.9 862.8,308.5" fill="#736414"/><polygon points="864.5,305.2 865.1,300.5 864.6,299.2 864,303.9" fill="#776615"/><polygon points="865.1,300.5 865.2,295.8 864.7,294.5 864.6,299.2" fill="#796915"/><polygon points="865.2,295.8 864.8,291.1 864.3,289.9 864.7,294.5" fill="#7c6b16"/><polygon points="864.8,291.1 863.9,286.4 863.4,285.2 864.3,289.9" fill="#7d6c16"/><polygon points="863.9,286.4 862.4,281.8 861.9,280.6 863.4,285.2" fill="#7e6d16"/><polygon points="599.4,279.6 597.7,284.2 598.2,282.9 599.9,278.4" fill="#f0cf2a"/><polygon points="597.7,284.2 596.5,288.8 597,287.6 598.2,282.9" fill="#f3d22b"/><polygon points="596.5,288.8 595.9,293.5 596.4,292.2 597,287.6" fill="#f7d52c"/><polygon points="595.9,293.5 595.8,298.2 596.3,296.9 596.4,292.2" fill="#f9d72c"/><polygon points="595.8,298.2 596.2,302.9 596.7,301.6 596.3,296.9" fill="#fcd92c"/><polygon points="596.2,302.9 597.1,307.5 597.6,306.2 596.7,301.6" fill="#fddb2d"/><polygon points="597.1,307.5 598.6,312.2 599.1,310.8 597.6,306.2" fill="#ffdc2d"/><polygon points="598.6,312.2 600.6,316.7 601.1,315.4 599.1,310.8" fill="#ffdc2d"/><polygon points="600.6,316.7 603.1,321.2 603.6,319.8 601.1,315.4" fill="#ffdc2d"/><polygon points="603.1,321.2 606.1,325.6 606.6,324.2 603.6,319.8" fill="#ffdc2d"/><polygon points="606.1,325.6 609.7,329.9 610.1,328.5 606.6,324.2" fill="#fedb2d"/><polygon points="610.1,328.5 614.1,332.6 614.7,331.2 610.8,327.1" fill="#ffe82f"/><polygon points="614.1,332.6 618.5,336.6 619.1,335.2 614.7,331.2" fill="#ffe62f"/><polygon points="618.5,336.6 623.4,340.4 624,339 619.1,335.2" fill="#ffe42f"/><polygon points="623.4,340.4 628.7,344.1 629.2,342.6 624,339" fill="#ffe12e"/><polygon points="628.7,344.1 634.4,347.5 634.9,346.1 629.2,342.6" fill="#ffde2d"/><polygon points="634.4,347.5 640.4,350.8 640.9,349.3 634.9,346.1" fill="#fddb2d"/><polygon points="640.4,350.8 646.9,353.8 647.3,352.3 640.9,349.3" fill="#f9d72c"/><polygon points="646.9,353.8 653.6,356.6 654,355.1 647.3,352.3" fill="#f4d32b"/><polygon points="653.6,356.6 660.7,359.2 661.1,357.7 654,355.1" fill="#efce2a"/><polygon points="660.7,359.2 668,361.5 668.4,360 661.1,357.7" fill="#e9c929"/><polygon points="668,361.5 675.6,363.6 675.9,362 668.4,360" fill="#e3c428"/><polygon points="675.6,363.6 683.4,365.4 683.7,363.8 675.9,362" fill="#dcbe27"/><polygon points="683.4,365.4 691.4,366.9 691.6,365.3 683.7,363.8" fill="#d6b826"/><polygon points="691.4,366.9 699.6,368.1 699.7,366.5 691.6,365.3" fill="#cfb224"/><polygon points="699.6,368.1 707.8,369.1 707.9,367.5 699.7,366.5" fill="#c7ac23"/><polygon points="707.8,369.1 716.2,369.7 716.2,368.1 707.9,367.5" fill="#c0a522"/><polygon points="716.2,369.7 724.6,370.1 724.6,368.5 716.2,368.1" fill="#b89f20"/><polygon points="724.6,370.1 733,370.2 733,368.6 724.6,368.5" fill="#b0981f"/><polygon points="733,370.2 741.4,369.9 741.4,368.3 733,368.6" fill="#a8911e"/><polygon points="741.4,369.9 749.8,369.4 749.7,367.8 741.4,368.3" fill="#9f8a1c"/><polygon points="749.8,369.4 758.1,368.6 758,367 749.7,367.8" fill="#97821b"/><polygon points="758.1,368.6 766.3,367.5 766.1,365.9 758,367" fill="#8f7b19"/><polygon points="766.3,367.5 774.4,366.1 774.1,364.6 766.1,365.9" fill="#867418"/><polygon points="774.4,366.1 782.2,364.5 782,362.9 774.1,364.6" fill="#7e6d16"/><polygon points="782.2,364.5 789.9,362.6 789.6,361 782,362.9" fill="#756515"/><polygon points="789.9,362.6 797.4,360.4 797,358.8 789.6,361" fill="#6d5e13"/><polygon points="797.4,360.4 804.5,357.9 804.2,356.4 797,358.8" fill="#655712"/><polygon points="804.5,357.9 811.4,355.2 811,353.7 804.2,356.4" fill="#5d5010"/><polygon points="811.4,355.2 818,352.3 817.5,350.8 811,353.7" fill="#554a0f"/><polygon points="818,352.3 824.2,349.2 823.7,347.7 817.5,350.8" fill="#4e430e"/><polygon points="824.2,349.2 830.1,345.8 829.5,344.3 823.7,347.7" fill="#463d0c"/><polygon points="830.1,345.8 835.5,342.3 835,340.8 829.5,344.3" fill="#3f360b"/><polygon points="835.5,342.3 840.6,338.5 840,337.1 835,340.8" fill="#38310a"/><polygon points="840.6,338.5 845.2,334.6 844.6,333.2 840,337.1" fill="#322b09"/><polygon points="845.2,334.6 849.3,330.5 848.7,329.2 844.6,333.2" fill="#38300a"/><polygon points="849.3,330.5 853,326.3 852.4,325 848.7,329.2" fill="#3e350b"/><polygon points="853,326.3 856.2,322 855.6,320.7 852.4,325" fill="#433a0c"/><polygon points="856.2,322 858.9,317.6 858.3,316.3 855.6,320.7" fill="#483e0d"/><polygon points="858.9,317.6 861.1,313.1 860.4,311.8 858.3,316.3" fill="#4d420e"/><polygon points="861.1,313.1 862.8,308.5 862.1,307.2 860.4,311.8" fill="#51460e"/><polygon points="862.8,308.5 864,303.9 863.3,302.6 862.1,307.2" fill="#54490f"/><polygon points="864,303.9 864.6,299.2 863.9,298 863.3,302.6" fill="#574c0f"/><polygon points="864.6,299.2 864.7,294.5 864,293.3 863.9,298" fill="#5a4e10"/><polygon points="864.7,294.5 864.3,289.9 863.6,288.7 864,293.3" fill="#5c5010"/><polygon points="864.3,289.9 863.4,285.2 862.6,284.1 863.6,288.7" fill="#5e5111"/><polygon points="863.4,285.2 861.9,280.6 861.2,279.5 862.6,284.1" fill="#5f5211"/><polygon points="861.9,280.6 859.9,276.1 859.2,275 861.2,279.5" fill="#5f5211"/><polygon points="859.9,276.1 857.4,271.6 856.7,270.5 859.2,275" fill="#605211"/><polygon points="604.8,269.4 602.1,273.8 602.7,272.8 605.4,268.4" fill="#f8d62c"/><polygon points="602.1,273.8 599.9,278.4 600.6,277.2 602.7,272.8" fill="#fdda2d"/><polygon points="599.9,278.4 598.2,282.9 598.9,281.8 600.6,277.2" fill="#ffde2d"/><polygon points="598.2,282.9 597,287.6 597.7,286.4 598.9,281.8" fill="#ffe12e"/><polygon points="597,287.6 596.4,292.2 597.1,291 597.7,286.4" fill="#ffe42f"/><polygon points="596.4,292.2 596.3,296.9 597,295.7 597.1,291" fill="#ffe62f"/><polygon points="596.3,296.9 596.7,301.6 597.4,300.3 597,295.7" fill="#ffe82f"/><polygon points="596.7,301.6 597.6,306.2 598.4,305 597.4,300.3" fill="#ffe930"/><polygon points="597.6,306.2 599.1,310.8 599.8,309.6 598.4,305" fill="#ffea30"/><polygon points="599.1,310.8 601.1,315.4 601.8,314.1 599.8,309.6" fill="#ffeb30"/><polygon points="601.1,315.4 603.6,319.8 604.3,318.5 601.8,314.1" fill="#ffeb30"/><polygon points="603.6,319.8 606.6,324.2 607.3,322.9 604.3,318.5" fill="#ffea30"/><polygon points="606.6,324.2 610.1,328.5 610.8,327.1 607.3,322.9" fill="#ffe930"/><polygon points="610.8,327.1 614.7,331.2 615.5,329.9 611.6,325.8" fill="#fff332"/><polygon points="614.7,331.2 619.1,335.2 619.9,333.8 615.5,329.9" fill="#fff231"/><polygon points="619.1,335.2 624,339 624.7,337.6 619.9,333.8" fill="#fff031"/><polygon points="624,339 629.2,342.6 629.9,341.2 624.7,337.6" fill="#ffed31"/><polygon points="629.2,342.6 634.9,346.1 635.5,344.6 629.9,341.2" fill="#ffea30"/><polygon points="634.9,346.1 640.9,349.3 641.5,347.8 635.5,344.6" fill="#ffe72f"/><polygon points="640.9,349.3 647.3,352.3 647.9,350.8 641.5,347.8" fill="#ffe32f"/><polygon points="647.3,352.3 654,355.1 654.6,353.6 647.9,350.8" fill="#ffe02e"/><polygon points="654,355.1 661.1,357.7 661.5,356.1 654.6,353.6" fill="#fedb2d"/><polygon points="661.1,357.7 668.4,360 668.8,358.4 661.5,356.1" fill="#f9d72c"/><polygon points="668.4,360 675.9,362 676.3,360.5 668.8,358.4" fill="#f3d22b"/><polygon points="675.9,362 683.7,363.8 684,362.2 676.3,360.5" fill="#edcd2a"/><polygon points="683.7,363.8 691.6,365.3 691.9,363.7 684,362.2" fill="#e7c729"/><polygon points="691.6,365.3 699.7,366.5 699.9,364.9 691.9,363.7" fill="#e0c228"/><polygon points="699.7,366.5 707.9,367.5 708.1,365.9 699.9,364.9" fill="#d9bc26"/><polygon points="707.9,367.5 716.2,368.1 716.3,366.5 708.1,365.9" fill="#d2b625"/><polygon points="716.2,368.1 724.6,368.5 724.7,366.9 716.3,366.5" fill="#cbaf24"/><polygon points="724.6,368.5 733,368.6 733,367 724.7,366.9" fill="#c4a923"/><polygon points="733,368.6 741.4,368.3 741.3,366.7 733,367" fill="#bca221"/><polygon points="741.4,368.3 749.7,367.8 749.6,366.2 741.3,366.7" fill="#b49c20"/><polygon points="749.7,367.8 758,367 757.8,365.4 749.6,366.2" fill="#ad951f"/><polygon points="758,367 766.1,365.9 765.9,364.4 757.8,365.4" fill="#a58e1d"/><polygon points="766.1,365.9 774.1,364.6 773.8,363 765.9,364.4" fill="#9d881c"/><polygon points="774.1,364.6 782,362.9 781.6,361.4 773.8,363" fill="#95811a"/><polygon points="782,362.9 789.6,361 789.2,359.5 781.6,361.4" fill="#8e7a19"/><polygon points="789.6,361 797,358.8 796.6,357.3 789.2,359.5" fill="#867418"/><polygon points="797,358.8 804.2,356.4 803.7,354.9 796.6,357.3" fill="#7e6d16"/><polygon points="804.2,356.4 811,353.7 810.5,352.2 803.7,354.9" fill="#776715"/><polygon points="811,353.7 817.5,350.8 817,349.3 810.5,352.2" fill="#706014"/><polygon points="817.5,350.8 823.7,347.7 823.1,346.2 817,349.3" fill="#695a12"/><polygon points="823.7,347.7 829.5,344.3 828.9,342.9 823.1,346.2" fill="#625411"/><polygon points="829.5,344.3 835,340.8 834.3,339.4 828.9,342.9" fill="#5b4f10"/><polygon points="835,340.8 840,337.1 839.3,335.7 834.3,339.4" fill="#55490f"/><polygon points="840,337.1 844.6,333.2 843.8,331.8 839.3,335.7" fill="#4f440e"/><polygon points="844.6,333.2 848.7,329.2 847.9,327.8 843.8,331.8" fill="#493f0d"/><polygon points="848.7,329.2 852.4,325 851.6,323.7 847.9,327.8" fill="#443a0c"/><polygon points="852.4,325 855.6,320.7 854.7,319.4 851.6,323.7" fill="#3f360b"/><polygon points="855.6,320.7 858.3,316.3 857.4,315 854.7,319.4" fill="#3a320a"/><polygon points="858.3,316.3 860.4,311.8 859.6,310.6 857.4,315" fill="#362f0a"/><polygon points="860.4,311.8 862.1,307.2 861.2,306 859.6,310.6" fill="#322b09"/><polygon points="862.1,307.2 863.3,302.6 862.4,301.5 861.2,306" fill="#352e09"/><polygon points="863.3,302.6 863.9,298 863,296.8 862.4,301.5" fill="#38300a"/><polygon points="863.9,298 864,293.3 863.1,292.2 863,296.8" fill="#3a320a"/><polygon points="864,293.3 863.6,288.7 862.7,287.6 863.1,292.2" fill="#3c340b"/><polygon points="863.6,288.7 862.6,284.1 861.8,283 862.7,287.6" fill="#3e350b"/><polygon points="862.6,284.1 861.2,279.5 860.3,278.5 861.8,283" fill="#3f360b"/><polygon points="861.2,279.5 859.2,275 858.3,274 860.3,278.5" fill="#3f370b"/><polygon points="859.2,275 856.7,270.5 855.9,269.6 858.3,274" fill="#3f370b"/><polygon points="856.7,270.5 853.7,266.2 852.9,265.2 855.9,269.6" fill="#3f360b"/><polygon points="853.7,266.2 850.2,261.9 849.4,261 852.9,265.2" fill="#3e350b"/><polygon points="612.3,259.9 608.6,264.1 609.4,263.1 613.1,259" fill="#fddb2d"/><polygon points="608.6,264.1 605.4,268.4 606.3,267.4 609.4,263.1" fill="#ffdf2e"/><polygon points="605.4,268.4 602.7,272.8 603.6,271.8 606.3,267.4" fill="#ffe32e"/><polygon points="602.7,272.8 600.6,277.2 601.4,276.2 603.6,271.8" fill="#ffe72f"/><polygon points="600.6,277.2 598.9,281.8 599.8,280.8 601.4,276.2" fill="#ffea30"/><polygon points="598.9,281.8 597.7,286.4 598.6,285.3 599.8,280.8" fill="#ffed30"/><polygon points="597.7,286.4 597.1,291 598,290 598.6,285.3" fill="#ffef31"/><polygon points="597.1,291 597,295.7 597.9,294.6 598,290" fill="#fff131"/><polygon points="597,295.7 597.4,300.3 598.3,299.2 597.9,294.6" fill="#fff332"/><polygon points="597.4,300.3 598.4,305 599.2,303.8 598.3,299.2" fill="#fff432"/><polygon points="598.4,305 599.8,309.6 600.7,308.3 599.2,303.8" fill="#fff532"/><polygon points="599.8,309.6 601.8,314.1 602.7,312.8 600.7,308.3" fill="#fff632"/><polygon points="601.8,314.1 604.3,318.5 605.1,317.2 602.7,312.8" fill="#fff632"/><polygon points="604.3,318.5 607.3,322.9 608.1,321.6 605.1,317.2" fill="#fff532"/><polygon points="607.3,322.9 610.8,327.1 611.6,325.8 608.1,321.6" fill="#fff532"/><polygon points="611.6,325.8 615.5,329.9 616.4,328.6 612.5,324.5" fill="#fffb33"/><polygon points="615.5,329.9 619.9,333.8 620.7,332.5 616.4,328.6" fill="#fffa33"/><polygon points="619.9,333.8 624.7,337.6 625.5,336.2 620.7,332.5" fill="#fff833"/><polygon points="624.7,337.6 629.9,341.2 630.7,339.8 625.5,336.2" fill="#fff632"/><polygon points="629.9,341.2 635.5,344.6 636.3,343.2 630.7,339.8" fill="#fff332"/><polygon points="635.5,344.6 641.5,347.8 642.2,346.4 636.3,343.2" fill="#fff031"/><polygon points="641.5,347.8 647.9,350.8 648.5,349.4 642.2,346.4" fill="#ffed30"/><polygon points="647.9,350.8 654.6,353.6 655.2,352.1 648.5,349.4" fill="#ffe930"/><polygon points="654.6,353.6 661.5,356.1 662.1,354.6 655.2,352.1" fill="#ffe52f"/><polygon points="661.5,356.1 668.8,358.4 669.3,356.9 662.1,354.6" fill="#ffe12e"/><polygon points="668.8,358.4 676.3,360.5 676.7,358.9 669.3,356.9" fill="#ffdd2d"/><polygon points="676.3,360.5 684,362.2 684.4,360.7 676.7,358.9" fill="#fad82c"/><polygon points="684,362.2 691.9,363.7 692.2,362.2 684.4,360.7" fill="#f5d32b"/><polygon points="691.9,363.7 699.9,364.9 700.2,363.4 692.2,362.2" fill="#efce2a"/><polygon points="699.9,364.9 708.1,365.9 708.3,364.3 700.2,363.4" fill="#e9c929"/><polygon points="708.1,365.9 716.3,366.5 716.5,364.9 708.3,364.3" fill="#e2c328"/><polygon points="716.3,366.5 724.7,366.9 724.7,365.3 716.5,364.9" fill="#dcbe27"/><polygon points="724.7,366.9 733,367 733,365.4 724.7,365.3" fill="#d5b826"/><polygon points="733,367 741.3,366.7 741.2,365.1 733,365.4" fill="#ceb224"/><polygon points="741.3,366.7 749.6,366.2 749.4,364.6 741.2,365.1" fill="#c7ac23"/><polygon points="749.6,366.2 757.8,365.4 757.6,363.9 749.4,364.6" fill="#c0a622"/><polygon points="757.8,365.4 765.9,364.4 765.6,362.8 757.6,363.9" fill="#b9a021"/><polygon points="765.9,364.4 773.8,363 773.5,361.4 765.6,362.8" fill="#b29a1f"/><polygon points="773.8,363 781.6,361.4 781.2,359.8 773.5,361.4" fill="#ab941e"/><polygon points="781.6,361.4 789.2,359.5 788.7,357.9 781.2,359.8" fill="#a48e1d"/><polygon points="789.2,359.5 796.6,357.3 796,355.8 788.7,357.9" fill="#9d881c"/><polygon points="796.6,357.3 803.7,354.9 803.1,353.4 796,355.8" fill="#96821b"/><polygon points="803.7,354.9 810.5,352.2 809.8,350.7 803.1,353.4" fill="#907c19"/><polygon points="810.5,352.2 817,349.3 816.3,347.9 809.8,350.7" fill="#897618"/><polygon points="817,349.3 823.1,346.2 822.4,344.8 816.3,347.9" fill="#837117"/><polygon points="823.1,346.2 828.9,342.9 828.1,341.5 822.4,344.8" fill="#7c6b16"/><polygon points="828.9,342.9 834.3,339.4 833.4,338 828.1,341.5" fill="#766615"/><polygon points="834.3,339.4 839.3,335.7 838.4,334.3 833.4,338" fill="#716114"/><polygon points="839.3,335.7 843.8,331.8 842.9,330.5 838.4,334.3" fill="#6b5d13"/><polygon points="843.8,331.8 847.9,327.8 847,326.5 842.9,330.5" fill="#665812"/><polygon points="847.9,327.8 851.6,323.7 850.6,322.4 847,326.5" fill="#615411"/><polygon points="851.6,323.7 854.7,319.4 853.7,318.2 850.6,322.4" fill="#5d5010"/><polygon points="854.7,319.4 857.4,315 856.4,313.8 853.7,318.2" fill="#594c10"/><polygon points="857.4,315 859.6,310.6 858.5,309.4 856.4,313.8" fill="#55490f"/><polygon points="859.6,310.6 861.2,306 860.2,304.9 858.5,309.4" fill="#51460e"/><polygon points="861.2,306 862.4,301.5 861.3,300.4 860.2,304.9" fill="#4e440e"/><polygon points="862.4,301.5 863,296.8 862,295.8 861.3,300.4" fill="#4c410d"/><polygon points="863,296.8 863.1,292.2 862.1,291.2 862,295.8" fill="#4a3f0d"/><polygon points="863.1,292.2 862.7,287.6 861.6,286.7 862.1,291.2" fill="#483e0d"/><polygon points="862.7,287.6 861.8,283 860.7,282.1 861.6,286.7" fill="#463d0c"/><polygon points="861.8,283 860.3,278.5 859.3,277.6 860.7,282.1" fill="#453c0c"/><polygon points="860.3,278.5 858.3,274 857.3,273.1 859.3,277.6" fill="#453c0c"/><polygon points="858.3,274 855.9,269.6 854.9,268.7 857.3,273.1" fill="#453c0c"/><polygon points="855.9,269.6 852.9,265.2 851.9,264.5 854.9,268.7" fill="#453c0c"/><polygon points="852.9,265.2 849.4,261 848.5,260.3 851.9,264.5" fill="#463d0c"/><polygon points="849.4,261 845.5,256.9 844.6,256.2 848.5,260.3" fill="#483e0d"/><polygon points="845.5,256.9 841.1,253 840.3,252.3 844.6,256.2" fill="#493f0d"/><polygon points="841.1,253 836.3,249.2 835.5,248.6 840.3,252.3" fill="#4b410d"/><polygon points="621.7,251.1 617.2,255 618.1,254.3 622.6,250.4" fill="#ffdc2d"/><polygon points="617.2,255 613.1,259 614,258.3 618.1,254.3" fill="#ffe12e"/><polygon points="613.1,259 609.4,263.1 610.4,262.4 614,258.3" fill="#ffe52f"/><polygon points="609.4,263.1 606.3,267.4 607.3,266.6 610.4,262.4" fill="#ffe930"/><polygon points="606.3,267.4 603.6,271.8 604.6,271 607.3,266.6" fill="#ffec30"/><polygon points="603.6,271.8 601.4,276.2 602.5,275.4 604.6,271" fill="#fff031"/><polygon points="601.4,276.2 599.8,280.8 600.8,279.9 602.5,275.4" fill="#fff332"/><polygon points="599.8,280.8 598.6,285.3 599.7,284.4 600.8,279.9" fill="#fff532"/><polygon points="598.6,285.3 598,290 599,289 599.7,284.4" fill="#fff733"/><polygon points="598,290 597.9,294.6 598.9,293.6 599,289" fill="#fff933"/><polygon points="597.9,294.6 598.3,299.2 599.4,298.1 598.9,293.6" fill="#fffb33"/><polygon points="598.3,299.2 599.2,303.8 600.3,302.7 599.4,298.1" fill="#fffc34"/><polygon points="599.2,303.8 600.7,308.3 601.7,307.2 600.3,302.7" fill="#fffd34"/><polygon points="600.7,308.3 602.7,312.8 603.7,311.7 601.7,307.2" fill="#fffd34"/><polygon points="602.7,312.8 605.1,317.2 606.1,316.1 603.7,311.7" fill="#fffd34"/><polygon points="605.1,317.2 608.1,321.6 609.1,320.3 606.1,316.1" fill="#fffd34"/><polygon points="608.1,321.6 611.6,325.8 612.5,324.5 609.1,320.3" fill="#fffc34"/><polygon points="612.5,324.5 616.4,328.6 617.4,327.4 613.6,323.3" fill="#ffff34"/><polygon points="616.4,328.6 620.7,332.5 621.7,331.2 617.4,327.4" fill="#fffe34"/><polygon points="620.7,332.5 625.5,336.2 626.5,334.9 621.7,331.2" fill="#fffc34"/><polygon points="625.5,336.2 630.7,339.8 631.6,338.5 626.5,334.9" fill="#fffa33"/><polygon points="630.7,339.8 636.3,343.2 637.1,341.8 631.6,338.5" fill="#fff833"/><polygon points="636.3,343.2 642.2,346.4 643,345 637.1,341.8" fill="#fff632"/><polygon points="642.2,346.4 648.5,349.4 649.3,348 643,345" fill="#fff332"/><polygon points="648.5,349.4 655.2,352.1 655.9,350.7 649.3,348" fill="#fff031"/><polygon points="655.2,352.1 662.1,354.6 662.7,353.2 655.9,350.7" fill="#ffec30"/><polygon points="662.1,354.6 669.3,356.9 669.8,355.4 662.7,353.2" fill="#ffe930"/><polygon points="669.3,356.9 676.7,358.9 677.2,357.4 669.8,355.4" fill="#ffe52f"/><polygon points="676.7,358.9 684.4,360.7 684.8,359.2 677.2,357.4" fill="#ffe12e"/><polygon points="684.4,360.7 692.2,362.2 692.5,360.6 684.8,359.2" fill="#ffdc2d"/><polygon points="692.2,362.2 700.2,363.4 700.4,361.8 692.5,360.6" fill="#fad82c"/><polygon points="700.2,363.4 708.3,364.3 708.5,362.7 700.4,361.8" fill="#f5d32b"/><polygon points="708.3,364.3 716.5,364.9 716.6,363.4 708.5,362.7" fill="#efce2a"/><polygon points="716.5,364.9 724.7,365.3 724.8,363.7 716.6,363.4" fill="#e9c929"/><polygon points="724.7,365.3 733,365.4 732.9,363.8 724.8,363.7" fill="#e3c428"/><polygon points="733,365.4 741.2,365.1 741.1,363.6 732.9,363.8" fill="#ddbf27"/><polygon points="741.2,365.1 749.4,364.6 749.3,363.1 741.1,363.6" fill="#d7ba26"/><polygon points="749.4,364.6 757.6,363.9 757.3,362.3 749.3,363.1" fill="#d1b525"/><polygon points="757.6,363.9 765.6,362.8 765.3,361.3 757.3,362.3" fill="#cbaf24"/><polygon points="765.6,362.8 773.5,361.4 773.1,359.9 765.3,361.3" fill="#c5aa23"/><polygon points="773.5,361.4 781.2,359.8 780.8,358.3 773.1,359.9" fill="#bfa522"/><polygon points="781.2,359.8 788.7,357.9 788.2,356.4 780.8,358.3" fill="#b99f21"/><polygon points="788.7,357.9 796,355.8 795.4,354.3 788.2,356.4" fill="#b39a20"/><polygon points="796,355.8 803.1,353.4 802.4,351.9 795.4,354.3" fill="#ad951e"/><polygon points="803.1,353.4 809.8,350.7 809.1,349.3 802.4,351.9" fill="#a7901d"/><polygon points="809.8,350.7 816.3,347.9 815.5,346.5 809.1,349.3" fill="#a18b1c"/><polygon points="816.3,347.9 822.4,344.8 821.5,343.4 815.5,346.5" fill="#9b861b"/><polygon points="822.4,344.8 828.1,341.5 827.2,340.2 821.5,343.4" fill="#96811a"/><polygon points="828.1,341.5 833.4,338 832.5,336.7 827.2,340.2" fill="#917d1a"/><polygon points="833.4,338 838.4,334.3 837.4,333.1 832.5,336.7" fill="#8c7919"/><polygon points="838.4,334.3 842.9,330.5 841.9,329.3 837.4,333.1" fill="#877418"/><polygon points="842.9,330.5 847,326.5 845.9,325.3 841.9,329.3" fill="#827017"/><polygon points="847,326.5 850.6,322.4 849.5,321.3 845.9,325.3" fill="#7e6d16"/><polygon points="850.6,322.4 853.7,318.2 852.6,317.1 849.5,321.3" fill="#7a6916"/><polygon points="853.7,318.2 856.4,313.8 855.2,312.8 852.6,317.1" fill="#766615"/><polygon points="856.4,313.8 858.5,309.4 857.4,308.4 855.2,312.8" fill="#736314"/><polygon points="858.5,309.4 860.2,304.9 859,303.9 857.4,308.4" fill="#706114"/><polygon points="860.2,304.9 861.3,300.4 860.1,299.4 859,303.9" fill="#6d5e13"/><polygon points="861.3,300.4 862,295.8 860.8,294.9 860.1,299.4" fill="#6b5c13"/><polygon points="862,295.8 862.1,291.2 860.9,290.4 860.8,294.9" fill="#695b13"/><polygon points="862.1,291.2 861.6,286.7 860.4,285.8 860.9,290.4" fill="#685912"/><polygon points="861.6,286.7 860.7,282.1 859.5,281.3 860.4,285.8" fill="#665812"/><polygon points="860.7,282.1 859.3,277.6 858.1,276.8 859.5,281.3" fill="#665812"/><polygon points="859.3,277.6 857.3,273.1 856.2,272.4 858.1,276.8" fill="#655712"/><polygon points="857.3,273.1 854.9,268.7 853.7,268.1 856.2,272.4" fill="#655712"/><polygon points="854.9,268.7 851.9,264.5 850.8,263.8 853.7,268.1" fill="#665812"/><polygon points="851.9,264.5 848.5,260.3 847.4,259.7 850.8,263.8" fill="#665812"/><polygon points="848.5,260.3 844.6,256.2 843.6,255.7 847.4,259.7" fill="#675912"/><polygon points="844.6,256.2 840.3,252.3 839.3,251.8 843.6,255.7" fill="#695b13"/><polygon points="840.3,252.3 835.5,248.6 834.5,248.1 839.3,251.8" fill="#6b5c13"/><polygon points="835.5,248.6 830.3,245 829.4,244.5 834.5,248.1" fill="#6d5e13"/><polygon points="830.3,245 824.7,241.6 823.9,241.2 829.4,244.5" fill="#706014"/><polygon points="824.7,241.6 818.8,238.4 818,238 823.9,241.2" fill="#736314"/><polygon points="644.7,236.9 638.6,240 639.5,239.6 645.5,236.5" fill="#f4d32b"/><polygon points="638.6,240 632.9,243.3 633.8,242.9 639.5,239.6" fill="#f9d72c"/><polygon points="632.9,243.3 627.6,246.8 628.5,246.3 633.8,242.9" fill="#ffdc2d"/><polygon points="627.6,246.8 622.6,250.4 623.6,250 628.5,246.3" fill="#ffe02e"/><polygon points="622.6,250.4 618.1,254.3 619.1,253.7 623.6,250" fill="#ffe42f"/><polygon points="618.1,254.3 614,258.3 615.1,257.7 619.1,253.7" fill="#ffe830"/><polygon points="614,258.3 610.4,262.4 611.5,261.8 615.1,257.7" fill="#ffec30"/><polygon points="610.4,262.4 607.3,266.6 608.4,266 611.5,261.8" fill="#ffef31"/><polygon points="607.3,266.6 604.6,271 605.8,270.3 608.4,266" fill="#fff232"/><polygon points="604.6,271 602.5,275.4 603.6,274.7 605.8,270.3" fill="#fff532"/><polygon points="602.5,275.4 600.8,279.9 602,279.1 603.6,274.7" fill="#fff833"/><polygon points="600.8,279.9 599.7,284.4 600.9,283.6 602,279.1" fill="#fffa33"/><polygon points="599.7,284.4 599,289 600.2,288.1 600.9,283.6" fill="#fffc34"/><polygon points="599,289 598.9,293.6 600.1,292.7 600.2,288.1" fill="#fffe34"/><polygon points="598.9,293.6 599.4,298.1 600.6,297.2 600.1,292.7" fill="#ffff34"/><polygon points="599.4,298.1 600.3,302.7 601.5,301.7 600.6,297.2" fill="#ffff34"/><polygon points="600.3,302.7 601.7,307.2 602.9,306.2 601.5,301.7" fill="#ffff35"/><polygon points="601.7,307.2 603.7,311.7 604.8,310.6 602.9,306.2" fill="#ffff35"/><polygon points="603.7,311.7 606.1,316.1 607.3,315 604.8,310.6" fill="#ffff35"/><polygon points="606.1,316.1 609.1,320.3 610.2,319.2 607.3,315" fill="#ffff35"/><polygon points="609.1,320.3 612.5,324.5 613.6,323.3 610.2,319.2" fill="#ffff34"/><polygon points="613.6,323.3 617.4,327.4 618.6,326.2 614.8,322.3" fill="#ffff34"/><polygon points="617.4,327.4 621.7,331.2 622.9,330.1 618.6,326.2" fill="#ffff34"/><polygon points="621.7,331.2 626.5,334.9 627.5,333.8 622.9,330.1" fill="#fffe34"/><polygon points="626.5,334.9 631.6,338.5 632.6,337.3 627.5,333.8" fill="#fffc34"/><polygon points="631.6,338.5 637.1,341.8 638.1,340.6 632.6,337.3" fill="#fffa33"/><polygon points="637.1,341.8 643,345 643.9,343.7 638.1,340.6" fill="#fff833"/><polygon points="643,345 649.3,348 650.1,346.6 643.9,343.7" fill="#fff532"/><polygon points="649.3,348 655.9,350.7 656.6,349.3 650.1,346.6" fill="#fff332"/><polygon points="655.9,350.7 662.7,353.2 663.4,351.8 656.6,349.3" fill="#fff031"/><polygon points="662.7,353.2 669.8,355.4 670.5,354 663.4,351.8" fill="#ffed30"/><polygon points="669.8,355.4 677.2,357.4 677.8,356 670.5,354" fill="#ffea30"/><polygon points="677.2,357.4 684.8,359.2 685.3,357.7 677.8,356" fill="#ffe62f"/><polygon points="684.8,359.2 692.5,360.6 692.9,359.2 685.3,357.7" fill="#ffe32e"/><polygon points="692.5,360.6 700.4,361.8 700.8,360.4 692.9,359.2" fill="#ffdf2e"/><polygon points="700.4,361.8 708.5,362.7 708.7,361.3 700.8,360.4" fill="#fddb2d"/><polygon points="708.5,362.7 716.6,363.4 716.7,361.9 708.7,361.3" fill="#f9d72c"/><polygon points="716.6,363.4 724.8,363.7 724.8,362.3 716.7,361.9" fill="#f4d32b"/><polygon points="724.8,363.7 732.9,363.8 732.9,362.3 724.8,362.3" fill="#efce2a"/><polygon points="732.9,363.8 741.1,363.6 741,362.1 732.9,362.3" fill="#eaca29"/><polygon points="741.1,363.6 749.3,363.1 749.1,361.6 741,362.1" fill="#e5c628"/><polygon points="749.3,363.1 757.3,362.3 757,360.8 749.1,361.6" fill="#e0c128"/><polygon points="757.3,362.3 765.3,361.3 764.9,359.8 757,360.8" fill="#dabd27"/><polygon points="765.3,361.3 773.1,359.9 772.7,358.5 764.9,359.8" fill="#d5b826"/><polygon points="773.1,359.9 780.8,358.3 780.2,356.9 772.7,358.5" fill="#d0b425"/><polygon points="780.8,358.3 788.2,356.4 787.6,355 780.2,356.9" fill="#cbaf24"/><polygon points="788.2,356.4 795.4,354.3 794.8,352.9 787.6,355" fill="#c6ab23"/><polygon points="795.4,354.3 802.4,351.9 801.7,350.6 794.8,352.9" fill="#c1a622"/><polygon points="802.4,351.9 809.1,349.3 808.3,348 801.7,350.6" fill="#bca221"/><polygon points="809.1,349.3 815.5,346.5 814.6,345.2 808.3,348" fill="#b79e20"/><polygon points="815.5,346.5 821.5,343.4 820.6,342.2 814.6,345.2" fill="#b29a1f"/><polygon points="821.5,343.4 827.2,340.2 826.2,338.9 820.6,342.2" fill="#ae961f"/><polygon points="827.2,340.2 832.5,336.7 831.5,335.5 826.2,338.9" fill="#a9921e"/><polygon points="832.5,336.7 837.4,333.1 836.3,331.9 831.5,335.5" fill="#a58e1d"/><polygon points="837.4,333.1 841.9,329.3 840.7,328.1 836.3,331.9" fill="#a18b1c"/><polygon points="841.9,329.3 845.9,325.3 844.7,324.2 840.7,328.1" fill="#9d881c"/><polygon points="845.9,325.3 849.5,321.3 848.3,320.2 844.7,324.2" fill="#99851b"/><polygon points="849.5,321.3 852.6,317.1 851.3,316.1 848.3,320.2" fill="#96821b"/><polygon points="852.6,317.1 855.2,312.8 854,311.8 851.3,316.1" fill="#937f1a"/><polygon points="855.2,312.8 857.4,308.4 856.1,307.5 854,311.8" fill="#907d19"/><polygon points="857.4,308.4 859,303.9 857.7,303.1 856.1,307.5" fill="#8e7a19"/><polygon points="859,303.9 860.1,299.4 858.8,298.6 857.7,303.1" fill="#8b7819"/><polygon points="860.1,299.4 860.8,294.9 859.4,294.1 858.8,298.6" fill="#8a7718"/><polygon points="860.8,294.9 860.9,290.4 859.5,289.6 859.4,294.1" fill="#887518"/><polygon points="860.9,290.4 860.4,285.8 859.1,285.1 859.5,289.6" fill="#877418"/><polygon points="860.4,285.8 859.5,281.3 858.2,280.7 859.1,285.1" fill="#867318"/><polygon points="859.5,281.3 858.1,276.8 856.8,276.2 858.2,280.7" fill="#857317"/><polygon points="858.1,276.8 856.2,272.4 854.9,271.9 856.8,276.2" fill="#857217"/><polygon points="856.2,272.4 853.7,268.1 852.5,267.6 854.9,271.9" fill="#857217"/><polygon points="853.7,268.1 850.8,263.8 849.6,263.4 852.5,267.6" fill="#857317"/><polygon points="850.8,263.8 847.4,259.7 846.2,259.3 849.6,263.4" fill="#867318"/><polygon points="847.4,259.7 843.6,255.7 842.4,255.3 846.2,259.3" fill="#867418"/><polygon points="843.6,255.7 839.3,251.8 838.1,251.5 842.4,255.3" fill="#887518"/><polygon points="839.3,251.8 834.5,248.1 833.5,247.8 838.1,251.5" fill="#897718"/><polygon points="834.5,248.1 829.4,244.5 828.4,244.3 833.5,247.8" fill="#8b7819"/><polygon points="829.4,244.5 823.9,241.2 822.9,241 828.4,244.3" fill="#8d7a19"/><polygon points="823.9,241.2 818,238 817.1,237.8 822.9,241" fill="#907c19"/><polygon points="818,238 811.7,235.1 810.9,234.9 817.1,237.8" fill="#937f1a"/><polygon points="811.7,235.1 805.1,232.3 804.4,232.2 810.9,234.9" fill="#96811a"/><polygon points="805.1,232.3 798.3,229.9 797.6,229.7 804.4,232.2" fill="#99841b"/><polygon points="798.3,229.9 791.2,227.6 790.5,227.5 797.6,229.7" fill="#9d871c"/><polygon points="791.2,227.6 783.8,225.6 783.2,225.5 790.5,227.5" fill="#a08a1c"/><polygon points="783.8,225.6 776.2,223.9 775.7,223.8 783.2,225.5" fill="#a48e1d"/><polygon points="776.2,223.9 768.5,222.4 768.1,222.4 775.7,223.8" fill="#a9921e"/><polygon points="768.5,222.4 760.6,221.2 760.2,221.2 768.1,222.4" fill="#ad951f"/><polygon points="760.6,221.2 752.5,220.3 752.3,220.3 760.2,221.2" fill="#b2991f"/><polygon points="752.5,220.3 744.4,219.6 744.3,219.6 752.3,220.3" fill="#b69d20"/><polygon points="711.7,219.9 703.7,220.7 704,220.7 711.9,219.9" fill="#cfb325"/><polygon points="703.7,220.7 695.7,221.8 696.1,221.7 704,220.7" fill="#d5b826"/><polygon points="695.7,221.8 687.9,223.1 688.3,223.1 696.1,221.7" fill="#dabc26"/><polygon points="687.9,223.1 680.2,224.7 680.8,224.7 688.3,223.1" fill="#dfc127"/><polygon points="680.2,224.7 672.8,226.6 673.4,226.5 680.8,224.7" fill="#e4c528"/><polygon points="672.8,226.6 665.6,228.7 666.2,228.6 673.4,226.5" fill="#e9c929"/><polygon points="665.6,228.7 658.6,231.1 659.3,231 666.2,228.6" fill="#eece2a"/><polygon points="658.6,231.1 651.9,233.7 652.7,233.6 659.3,231" fill="#f3d22b"/><polygon points="651.9,233.7 645.5,236.5 646.4,236.4 652.7,233.6" fill="#f8d62c"/><polygon points="645.5,236.5 639.5,239.6 640.4,239.4 646.4,236.4" fill="#fdda2d"/><polygon points="639.5,239.6 633.8,242.9 634.8,242.6 640.4,239.4" fill="#ffde2d"/><polygon points="633.8,242.9 628.5,246.3 629.5,246 634.8,242.6" fill="#ffe22e"/><polygon points="628.5,246.3 623.6,250 624.7,249.6 629.5,246" fill="#ffe62f"/><polygon points="623.6,250 619.1,253.7 620.3,253.4 624.7,249.6" fill="#ffe930"/><polygon points="619.1,253.7 615.1,257.7 616.3,257.3 620.3,253.4" fill="#ffec30"/><polygon points="615.1,257.7 611.5,261.8 612.7,261.3 616.3,257.3" fill="#fff031"/><polygon points="611.5,261.8 608.4,266 609.7,265.5 612.7,261.3" fill="#fff232"/><polygon points="608.4,266 605.8,270.3 607,269.7 609.7,265.5" fill="#fff532"/><polygon points="605.8,270.3 603.6,274.7 604.9,274.1 607,269.7" fill="#fff833"/><polygon points="603.6,274.7 602,279.1 603.3,278.5 604.9,274.1" fill="#fffa33"/><polygon points="602,279.1 600.9,283.6 602.2,282.9 603.3,278.5" fill="#fffc34"/><polygon points="600.9,283.6 600.2,288.1 601.6,287.4 602.2,282.9" fill="#fffd34"/><polygon points="600.2,288.1 600.1,292.7 601.5,291.9 601.6,287.4" fill="#ffff34"/><polygon points="600.1,292.7 600.6,297.2 601.9,296.4 601.5,291.9" fill="#ffff34"/><polygon points="600.6,297.2 601.5,301.7 602.8,300.9 601.9,296.4" fill="#ffff35"/><polygon points="601.5,301.7 602.9,306.2 604.2,305.3 602.8,300.9" fill="#ffff35"/><polygon points="602.9,306.2 604.8,310.6 606.1,309.7 604.2,305.3" fill="#ffff35"/><polygon points="604.8,310.6 607.3,315 608.5,314 606.1,309.7" fill="#ffff35"/><polygon points="607.3,315 610.2,319.2 611.4,318.2 608.5,314" fill="#ffff35"/><polygon points="610.2,319.2 613.6,323.3 614.8,322.3 611.4,318.2" fill="#ffff35"/><polygon points="614.8,322.3 618.6,326.2 619.9,325.3 616.1,321.3" fill="#fffd34"/><polygon points="618.6,326.2 622.9,330.1 624.1,329 619.9,325.3" fill="#fffc34"/><polygon points="622.9,330.1 627.5,333.8 628.7,332.7 624.1,329" fill="#fffb33"/><polygon points="627.5,333.8 632.6,337.3 633.7,336.2 628.7,332.7" fill="#fffa33"/><polygon points="632.6,337.3 638.1,340.6 639.1,339.4 633.7,336.2" fill="#fff833"/><polygon points="638.1,340.6 643.9,343.7 644.9,342.5 639.1,339.4" fill="#fff632"/><polygon points="643.9,343.7 650.1,346.6 651,345.4 644.9,342.5" fill="#fff532"/><polygon points="650.1,346.6 656.6,349.3 657.4,348.1 651,345.4" fill="#fff232"/><polygon points="656.6,349.3 663.4,351.8 664.2,350.5 657.4,348.1" fill="#fff031"/><polygon points="663.4,351.8 670.5,354 671.1,352.7 664.2,350.5" fill="#ffee31"/><polygon points="670.5,354 677.8,356 678.3,354.7 671.1,352.7" fill="#ffeb30"/><polygon points="677.8,356 685.3,357.7 685.8,356.4 678.3,354.7" fill="#ffe830"/><polygon points="685.3,357.7 692.9,359.2 693.3,357.8 685.8,356.4" fill="#ffe62f"/><polygon points="692.9,359.2 700.8,360.4 701.1,359 693.3,357.8" fill="#ffe32e"/><polygon points="700.8,360.4 708.7,361.3 708.9,359.9 701.1,359" fill="#ffdf2e"/><polygon points="708.7,361.3 716.7,361.9 716.9,360.5 708.9,359.9" fill="#ffdc2d"/><polygon points="716.7,361.9 724.8,362.3 724.9,360.9 716.9,360.5" fill="#fbd92c"/><polygon points="724.8,362.3 732.9,362.3 732.9,360.9 724.9,360.9" fill="#f7d52c"/><polygon points="732.9,362.3 741,362.1 740.9,360.7 732.9,360.9" fill="#f3d22b"/><polygon points="741,362.1 749.1,361.6 748.9,360.2 740.9,360.7" fill="#efce2a"/><polygon points="749.1,361.6 757,360.8 756.8,359.5 748.9,360.2" fill="#ebcb2a"/><polygon points="757,360.8 764.9,359.8 764.5,358.4 756.8,359.5" fill="#e7c729"/><polygon points="764.9,359.8 772.7,358.5 772.2,357.1 764.5,358.4" fill="#e3c428"/><polygon points="772.7,358.5 780.2,356.9 779.7,355.6 772.2,357.1" fill="#dfc027"/><polygon points="780.2,356.9 787.6,355 787,353.7 779.7,355.6" fill="#dabd27"/><polygon points="787.6,355 794.8,352.9 794.1,351.6 787,353.7" fill="#d6b926"/><polygon points="794.8,352.9 801.7,350.6 800.9,349.3 794.1,351.6" fill="#d2b625"/><polygon points="801.7,350.6 808.3,348 807.4,346.8 800.9,349.3" fill="#ceb224"/><polygon points="808.3,348 814.6,345.2 813.7,344 807.4,346.8" fill="#cbaf24"/><polygon points="814.6,345.2 820.6,342.2 819.6,341 813.7,344" fill="#c7ac23"/><polygon points="820.6,342.2 826.2,338.9 825.1,337.8 819.6,341" fill="#c3a822"/><polygon points="826.2,338.9 831.5,335.5 830.3,334.4 825.1,337.8" fill="#c0a522"/><polygon points="831.5,335.5 836.3,331.9 835.1,330.9 830.3,334.4" fill="#bca321"/><polygon points="836.3,331.9 840.7,328.1 839.5,327.1 835.1,330.9" fill="#b9a021"/><polygon points="840.7,328.1 844.7,324.2 843.4,323.3 839.5,327.1" fill="#b69d20"/><polygon points="844.7,324.2 848.3,320.2 847,319.3 843.4,323.3" fill="#b39b20"/><polygon points="848.3,320.2 851.3,316.1 850,315.2 847,319.3" fill="#b0981f"/><polygon points="851.3,316.1 854,311.8 852.6,311 850,315.2" fill="#ae961f"/><polygon points="854,311.8 856.1,307.5 854.7,306.7 852.6,311" fill="#ac941e"/><polygon points="856.1,307.5 857.7,303.1 856.3,302.3 854.7,306.7" fill="#aa931e"/><polygon points="857.7,303.1 858.8,298.6 857.4,297.9 856.3,302.3" fill="#a8911e"/><polygon points="858.8,298.6 859.4,294.1 858,293.5 857.4,297.9" fill="#a6901d"/><polygon points="859.4,294.1 859.5,289.6 858.1,289 858,293.5" fill="#a58f1d"/><polygon points="859.5,289.6 859.1,285.1 857.7,284.6 858.1,289" fill="#a48e1d"/><polygon points="859.1,285.1 858.2,280.7 856.8,280.2 857.7,284.6" fill="#a38d1d"/><polygon points="858.2,280.7 856.8,276.2 855.4,275.8 856.8,280.2" fill="#a38d1d"/><polygon points="856.8,276.2 854.9,271.9 853.5,271.5 855.4,275.8" fill="#a38c1d"/><polygon points="854.9,271.9 852.5,267.6 851.1,267.2 853.5,271.5" fill="#a38c1d"/><polygon points="852.5,267.6 849.6,263.4 848.2,263.1 851.1,267.2" fill="#a38d1d"/><polygon points="849.6,263.4 846.2,259.3 844.9,259 848.2,263.1" fill="#a38d1d"/><polygon points="846.2,259.3 842.4,255.3 841.1,255.1 844.9,259" fill="#a48e1d"/><polygon points="842.4,255.3 838.1,251.5 836.9,251.3 841.1,255.1" fill="#a58e1d"/><polygon points="838.1,251.5 833.5,247.8 832.3,247.7 836.9,251.3" fill="#a6901d"/><polygon points="833.5,247.8 828.4,244.3 827.3,244.2 832.3,247.7" fill="#a8911e"/><polygon points="828.4,244.3 822.9,241 821.9,240.9 827.3,244.2" fill="#aa921e"/><polygon points="822.9,241 817.1,237.8 816.1,237.8 821.9,240.9" fill="#ac941e"/><polygon points="817.1,237.8 810.9,234.9 810,234.9 816.1,237.8" fill="#ae961f"/><polygon points="810.9,234.9 804.4,232.2 803.6,232.3 810,234.9" fill="#b0981f"/><polygon points="804.4,232.2 797.6,229.7 796.8,229.8 803.6,232.3" fill="#b39a20"/><polygon points="797.6,229.7 790.5,227.5 789.9,227.6 796.8,229.8" fill="#b69d20"/><polygon points="790.5,227.5 783.2,225.5 782.7,225.7 789.9,227.6" fill="#b99f21"/><polygon points="783.2,225.5 775.7,223.8 775.2,224 782.7,225.7" fill="#bca221"/><polygon points="775.7,223.8 768.1,222.4 767.7,222.5 775.2,224" fill="#bfa522"/><polygon points="768.1,222.4 760.2,221.2 759.9,221.4 767.7,222.5" fill="#c3a822"/><polygon points="760.2,221.2 752.3,220.3 752.1,220.5 759.9,221.4" fill="#c6ab23"/><polygon points="752.3,220.3 744.3,219.6 744.1,219.8 752.1,220.5" fill="#caae24"/><polygon points="744.3,219.6 736.2,219.3 736.1,219.5 744.1,219.8" fill="#ceb224"/><polygon points="736.2,219.3 728.1,219.2 728.1,219.4 736.1,219.5" fill="#d2b525"/><polygon points="728.1,219.2 720,219.4 720.1,219.6 728.1,219.4" fill="#d6b926"/><polygon points="720,219.4 711.9,219.9 712.1,220.1 720.1,219.6" fill="#dabc27"/><polygon points="711.9,219.9 704,220.7 704.2,220.9 712.1,220.1" fill="#dec027"/><polygon points="704,220.7 696.1,221.7 696.5,221.9 704.2,220.9" fill="#e2c328"/><polygon points="696.1,221.7 688.3,223.1 688.8,223.2 696.5,221.9" fill="#e6c729"/><polygon points="688.3,223.1 680.8,224.7 681.3,224.8 688.8,223.2" fill="#eaca29"/><polygon points="680.8,224.7 673.4,226.5 674,226.6 681.3,224.8" fill="#efce2a"/><polygon points="673.4,226.5 666.2,228.6 666.9,228.7 674,226.6" fill="#f3d22b"/><polygon points="666.2,228.6 659.3,231 660.1,231 666.9,228.7" fill="#f7d52c"/><polygon points="659.3,231 652.7,233.6 653.6,233.6 660.1,231" fill="#fbd82c"/><polygon points="652.7,233.6 646.4,236.4 647.3,236.4 653.6,233.6" fill="#fedc2d"/><polygon points="646.4,236.4 640.4,239.4 641.4,239.4 647.3,236.4" fill="#ffdf2e"/><polygon points="640.4,239.4 634.8,242.6 635.9,242.6 641.4,239.4" fill="#ffe22e"/><polygon points="634.8,242.6 629.5,246 630.7,245.9 635.9,242.6" fill="#ffe52f"/><polygon points="629.5,246 624.7,249.6 625.9,249.5 630.7,245.9" fill="#ffe82f"/><polygon points="624.7,249.6 620.3,253.4 621.5,253.2 625.9,249.5" fill="#ffeb30"/><polygon points="620.3,253.4 616.3,257.3 617.6,257.1 621.5,253.2" fill="#ffed31"/><polygon points="616.3,257.3 612.7,261.3 614,261.1 617.6,257.1" fill="#fff031"/><polygon points="612.7,261.3 609.7,265.5 611,265.2 614,261.1" fill="#fff232"/><polygon points="609.7,265.5 607,269.7 608.4,269.4 611,265.2" fill="#fff432"/><polygon points="607,269.7 604.9,274.1 606.3,273.7 608.4,269.4" fill="#fff632"/><polygon points="604.9,274.1 603.3,278.5 604.7,278 606.3,273.7" fill="#fff833"/><polygon points="603.3,278.5 602.2,282.9 603.6,282.4 604.7,278" fill="#fffa33"/><polygon points="602.2,282.9 601.6,287.4 603,286.9 603.6,282.4" fill="#fffb33"/><polygon points="601.6,287.4 601.5,291.9 602.9,291.3 603,286.9" fill="#fffc34"/><polygon points="601.5,291.9 601.9,296.4 603.3,295.7 602.9,291.3" fill="#fffd34"/><polygon points="601.9,296.4 602.8,300.9 604.2,300.2 603.3,295.7" fill="#fffe34"/><polygon points="602.8,300.9 604.2,305.3 605.6,304.5 604.2,300.2" fill="#fffe34"/><polygon points="604.2,305.3 606.1,309.7 607.5,308.9 605.6,304.5" fill="#fffe34"/><polygon points="606.1,309.7 608.5,314 609.9,313.1 607.5,308.9" fill="#fffe34"/><polygon points="608.5,314 611.4,318.2 612.8,317.3 609.9,313.1" fill="#fffe34"/><polygon points="611.4,318.2 614.8,322.3 616.1,321.3 612.8,317.3" fill="#fffe34"/><polygon points="616.1,321.3 619.9,325.3 621.2,324.4 617.4,320.5" fill="#fff632"/><polygon points="619.9,325.3 624.1,329 625.3,328.2 621.2,324.4" fill="#fff632"/><polygon points="624.1,329 628.7,332.7 629.9,331.7 625.3,328.2" fill="#fff532"/><polygon points="628.7,332.7 633.7,336.2 634.9,335.2 629.9,331.7" fill="#fff432"/><polygon points="633.7,336.2 639.1,339.4 640.2,338.4 634.9,335.2" fill="#fff332"/><polygon points="639.1,339.4 644.9,342.5 645.9,341.5 640.2,338.4" fill="#fff231"/><polygon points="644.9,342.5 651,345.4 652,344.3 645.9,341.5" fill="#fff031"/><polygon points="651,345.4 657.4,348.1 658.3,347 652,344.3" fill="#ffef31"/><polygon points="657.4,348.1 664.2,350.5 665,349.4 658.3,347" fill="#ffed31"/><polygon points="664.2,350.5 671.1,352.7 671.8,351.6 665,349.4" fill="#ffeb30"/><polygon points="671.1,352.7 678.3,354.7 679,353.5 671.8,351.6" fill="#ffe930"/><polygon points="678.3,354.7 685.8,356.4 686.3,355.2 679,353.5" fill="#ffe72f"/><polygon points="685.8,356.4 693.3,357.8 693.8,356.6 686.3,355.2" fill="#ffe52f"/><polygon points="693.3,357.8 701.1,359 701.4,357.7 693.8,356.6" fill="#ffe32e"/><polygon points="701.1,359 708.9,359.9 709.2,358.6 701.4,357.7" fill="#ffe12e"/><polygon points="708.9,359.9 716.9,360.5 717,359.2 709.2,358.6" fill="#ffdf2e"/><polygon points="716.9,360.5 724.9,360.9 724.9,359.6 717,359.2" fill="#ffdc2d"/><polygon points="724.9,360.9 732.9,360.9 732.9,359.7 724.9,359.6" fill="#fcda2d"/><polygon points="732.9,360.9 740.9,360.7 740.8,359.5 732.9,359.7" fill="#f9d72c"/><polygon points="740.9,360.7 748.9,360.2 748.6,359 740.8,359.5" fill="#f6d52b"/><polygon points="748.9,360.2 756.8,359.5 756.4,358.2 748.6,359" fill="#f3d22b"/><polygon points="756.8,359.5 764.5,358.4 764.1,357.2 756.4,358.2" fill="#f0cf2a"/><polygon points="764.5,358.4 772.2,357.1 771.7,355.9 764.1,357.2" fill="#edcd2a"/><polygon points="772.2,357.1 779.7,355.6 779.1,354.3 771.7,355.9" fill="#eaca29"/><polygon points="779.7,355.6 787,353.7 786.3,352.5 779.1,354.3" fill="#e7c829"/><polygon points="787,353.7 794.1,351.6 793.3,350.5 786.3,352.5" fill="#e4c528"/><polygon points="794.1,351.6 800.9,349.3 800,348.2 793.3,350.5" fill="#e1c328"/><polygon points="800.9,349.3 807.4,346.8 806.5,345.7 800,348.2" fill="#dec027"/><polygon points="807.4,346.8 813.7,344 812.7,342.9 806.5,345.7" fill="#dcbe27"/><polygon points="813.7,344 819.6,341 818.5,339.9 812.7,342.9" fill="#d9bb26"/><polygon points="819.6,341 825.1,337.8 824,336.8 818.5,339.9" fill="#d6b926"/><polygon points="825.1,337.8 830.3,334.4 829.1,333.5 824,336.8" fill="#d4b725"/><polygon points="830.3,334.4 835.1,330.9 833.9,329.9 829.1,333.5" fill="#d1b525"/><polygon points="835.1,330.9 839.5,327.1 838.2,326.3 833.9,329.9" fill="#cfb325"/><polygon points="839.5,327.1 843.4,323.3 842.1,322.5 838.2,326.3" fill="#cdb124"/><polygon points="843.4,323.3 847,319.3 845.6,318.5 842.1,322.5" fill="#cbaf24"/><polygon points="847,319.3 850,315.2 848.6,314.4 845.6,318.5" fill="#c9ad23"/><polygon points="850,315.2 852.6,311 851.1,310.3 848.6,314.4" fill="#c7ac23"/><polygon points="852.6,311 854.7,306.7 853.2,306.1 851.1,310.3" fill="#c5aa23"/><polygon points="854.7,306.7 856.3,302.3 854.8,301.8 853.2,306.1" fill="#c4a923"/><polygon points="856.3,302.3 857.4,297.9 855.9,297.4 854.8,301.8" fill="#c3a822"/><polygon points="857.4,297.9 858,293.5 856.5,293 855.9,297.4" fill="#c1a722"/><polygon points="858,293.5 858.1,289 856.6,288.6 856.5,293" fill="#c0a622"/><polygon points="858.1,289 857.7,284.6 856.2,284.2 856.6,288.6" fill="#c0a622"/><polygon points="857.7,284.6 856.8,280.2 855.3,279.9 856.2,284.2" fill="#bfa522"/><polygon points="856.8,280.2 855.4,275.8 853.9,275.6 855.3,279.9" fill="#bfa522"/><polygon points="855.4,275.8 853.5,271.5 852,271.3 853.9,275.6" fill="#bfa522"/><polygon points="853.5,271.5 851.1,267.2 849.7,267.1 852,271.3" fill="#bfa422"/><polygon points="851.1,267.2 848.2,263.1 846.8,263 849.7,267.1" fill="#bfa522"/><polygon points="848.2,263.1 844.9,259 843.6,259 846.8,263" fill="#bfa522"/><polygon points="844.9,259 841.1,255.1 839.8,255.1 843.6,259" fill="#c0a522"/><polygon points="841.1,255.1 836.9,251.3 835.7,251.3 839.8,255.1" fill="#c0a622"/><polygon points="836.9,251.3 832.3,247.7 831.1,247.8 835.7,251.3" fill="#c1a722"/><polygon points="832.3,247.7 827.3,244.2 826.1,244.3 831.1,247.8" fill="#c2a822"/><polygon points="827.3,244.2 821.9,240.9 820.8,241.1 826.1,244.3" fill="#c4a923"/><polygon points="821.9,240.9 816.1,237.8 815.1,238 820.8,241.1" fill="#c5aa23"/><polygon points="816.1,237.8 810,234.9 809,235.2 815.1,238" fill="#c7ac23"/><polygon points="810,234.9 803.6,232.3 802.7,232.5 809,235.2" fill="#c8ad23"/><polygon points="803.6,232.3 796.8,229.8 796,230.1 802.7,232.5" fill="#caaf24"/><polygon points="796.8,229.8 789.9,227.6 789.2,227.9 796,230.1" fill="#ccb124"/><polygon points="789.9,227.6 782.7,225.7 782,226 789.2,227.9" fill="#cfb225"/><polygon points="782.7,225.7 775.2,224 774.7,224.3 782,226" fill="#d1b425"/><polygon points="775.2,224 767.7,222.5 767.2,222.9 774.7,224.3" fill="#d3b625"/><polygon points="767.7,222.5 759.9,221.4 759.6,221.8 767.2,222.9" fill="#d6b926"/><polygon points="759.9,221.4 752.1,220.5 751.8,220.9 759.6,221.8" fill="#d9bb26"/><polygon points="752.1,220.5 744.1,219.8 744,220.2 751.8,220.9" fill="#dbbd27"/><polygon points="744.1,219.8 736.1,219.5 736.1,219.9 744,220.2" fill="#dec027"/><polygon points="736.1,219.5 728.1,219.4 728.1,219.8 736.1,219.9" fill="#e1c228"/><polygon points="728.1,219.4 720.1,219.6 720.2,220 728.1,219.8" fill="#e4c528"/><polygon points="720.1,219.6 712.1,220.1 712.4,220.5 720.2,220" fill="#e7c729"/><polygon points="712.1,220.1 704.2,220.9 704.6,221.3 712.4,220.5" fill="#eaca29"/><polygon points="704.2,220.9 696.5,221.9 696.9,222.3 704.6,221.3" fill="#edcc2a"/><polygon points="696.5,221.9 688.8,223.2 689.3,223.6 696.9,222.3" fill="#f0cf2a"/><polygon points="688.8,223.2 681.3,224.8 681.9,225.2 689.3,223.6" fill="#f3d22b"/><polygon points="681.3,224.8 674,226.6 674.7,227 681.9,225.2" fill="#f6d42b"/><polygon points="674,226.6 666.9,228.7 667.7,229 674.7,227" fill="#f9d72c"/><polygon points="666.9,228.7 660.1,231 661,231.3 667.7,229" fill="#fcd92c"/><polygon points="660.1,231 653.6,233.6 654.5,233.8 661,231.3" fill="#ffdc2d"/><polygon points="653.6,233.6 647.3,236.4 648.3,236.6 654.5,233.8" fill="#ffde2d"/><polygon points="647.3,236.4 641.4,239.4 642.5,239.5 648.3,236.6" fill="#ffe12e"/><polygon points="641.4,239.4 635.9,242.6 637,242.7 642.5,239.5" fill="#ffe32e"/><polygon points="635.9,242.6 630.7,245.9 631.9,246 637,242.7" fill="#ffe52f"/><polygon points="630.7,245.9 625.9,249.5 627.1,249.6 631.9,246" fill="#ffe72f"/><polygon points="625.9,249.5 621.5,253.2 622.8,253.2 627.1,249.6" fill="#ffe930"/><polygon points="621.5,253.2 617.6,257.1 618.9,257 622.8,253.2" fill="#ffeb30"/><polygon points="617.6,257.1 614,261.1 615.4,261 618.9,257" fill="#ffed30"/><polygon points="614,261.1 611,265.2 612.4,265 615.4,261" fill="#ffef31"/><polygon points="611,265.2 608.4,269.4 609.9,269.2 612.4,265" fill="#fff031"/><polygon points="608.4,269.4 606.3,273.7 607.8,273.4 609.9,269.2" fill="#fff131"/><polygon points="606.3,273.7 604.7,278 606.2,277.7 607.8,273.4" fill="#fff332"/><polygon points="604.7,278 603.6,282.4 605.1,282.1 606.2,277.7" fill="#fff432"/><polygon points="603.6,282.4 603,286.9 604.5,286.5 605.1,282.1" fill="#fff532"/><polygon points="603,286.9 602.9,291.3 604.4,290.9 604.5,286.5" fill="#fff632"/><polygon points="602.9,291.3 603.3,295.7 604.8,295.3 604.4,290.9" fill="#fff632"/><polygon points="603.3,295.7 604.2,300.2 605.7,299.6 604.8,295.3" fill="#fff733"/><polygon points="604.2,300.2 605.6,304.5 607.1,303.9 605.7,299.6" fill="#fff733"/><polygon points="605.6,304.5 607.5,308.9 609,308.2 607.1,303.9" fill="#fff733"/><polygon points="607.5,308.9 609.9,313.1 611.3,312.4 609,308.2" fill="#fff733"/><polygon points="609.9,313.1 612.8,317.3 614.2,316.5 611.3,312.4" fill="#fff733"/><polygon points="612.8,317.3 616.1,321.3 617.4,320.5 614.2,316.5" fill="#fff733"/><polygon points="617.4,320.5 621.2,324.4 622.5,323.7 618.9,319.9" fill="#ffec30"/><polygon points="621.2,324.4 625.3,328.2 626.6,327.4 622.5,323.7" fill="#ffec30"/><polygon points="625.3,328.2 629.9,331.7 631.2,331 626.6,327.4" fill="#ffeb30"/><polygon points="629.9,331.7 634.9,335.2 636.1,334.3 631.2,331" fill="#ffeb30"/><polygon points="634.9,335.2 640.2,338.4 641.4,337.6 636.1,334.3" fill="#ffea30"/><polygon points="640.2,338.4 645.9,341.5 647,340.6 641.4,337.6" fill="#ffe930"/><polygon points="645.9,341.5 652,344.3 653,343.4 647,340.6" fill="#ffe930"/><polygon points="652,344.3 658.3,347 659.2,346 653,343.4" fill="#ffe82f"/><polygon points="658.3,347 665,349.4 665.8,348.4 659.2,346" fill="#ffe72f"/><polygon points="665,349.4 671.8,351.6 672.6,350.5 665.8,348.4" fill="#ffe62f"/><polygon points="671.8,351.6 679,353.5 679.6,352.4 672.6,350.5" fill="#ffe42f"/><polygon points="679,353.5 686.3,355.2 686.8,354.1 679.6,352.4" fill="#ffe32f"/><polygon points="686.3,355.2 693.8,356.6 694.3,355.5 686.8,354.1" fill="#ffe22e"/><polygon points="693.8,356.6 701.4,357.7 701.8,356.6 694.3,355.5" fill="#ffe12e"/><polygon points="701.4,357.7 709.2,358.6 709.5,357.5 701.8,356.6" fill="#ffdf2e"/><polygon points="709.2,358.6 717,359.2 717.2,358.1 709.5,357.5" fill="#ffde2d"/><polygon points="717,359.2 724.9,359.6 725,358.5 717.2,358.1" fill="#ffdc2d"/><polygon points="724.9,359.6 732.9,359.7 732.8,358.5 725,358.5" fill="#fddb2d"/><polygon points="732.9,359.7 740.8,359.5 740.6,358.3 732.8,358.5" fill="#fcd92c"/><polygon points="740.8,359.5 748.6,359 748.4,357.8 740.6,358.3" fill="#fad82c"/><polygon points="748.6,359 756.4,358.2 756.1,357.1 748.4,357.8" fill="#f8d62c"/><polygon points="756.4,358.2 764.1,357.2 763.7,356.1 756.1,357.1" fill="#f6d52c"/><polygon points="764.1,357.2 771.7,355.9 771.2,354.8 763.7,356.1" fill="#f4d32b"/><polygon points="771.7,355.9 779.1,354.3 778.5,353.3 771.2,354.8" fill="#f3d12b"/><polygon points="779.1,354.3 786.3,352.5 785.6,351.5 778.5,353.3" fill="#f1d02b"/><polygon points="786.3,352.5 793.3,350.5 792.5,349.5 785.6,351.5" fill="#efce2a"/><polygon points="793.3,350.5 800,348.2 799.2,347.2 792.5,349.5" fill="#edcd2a"/><polygon points="800,348.2 806.5,345.7 805.6,344.7 799.2,347.2" fill="#ebcb2a"/><polygon points="806.5,345.7 812.7,342.9 811.6,342 805.6,344.7" fill="#eaca29"/><polygon points="812.7,342.9 818.5,339.9 817.4,339.1 811.6,342" fill="#e8c829"/><polygon points="818.5,339.9 824,336.8 822.8,335.9 817.4,339.1" fill="#e6c729"/><polygon points="824,336.8 829.1,333.5 827.9,332.6 822.8,335.9" fill="#e5c628"/><polygon points="829.1,333.5 833.9,329.9 832.6,329.2 827.9,332.6" fill="#e3c428"/><polygon points="833.9,329.9 838.2,326.3 836.8,325.6 832.6,329.2" fill="#e2c328"/><polygon points="838.2,326.3 842.1,322.5 840.7,321.8 836.8,325.6" fill="#e1c228"/><polygon points="842.1,322.5 845.6,318.5 844.1,317.9 840.7,321.8" fill="#dfc127"/><polygon points="845.6,318.5 848.6,314.4 847.1,313.9 844.1,317.9" fill="#dec027"/><polygon points="848.6,314.4 851.1,310.3 849.6,309.8 847.1,313.9" fill="#ddbf27"/><polygon points="851.1,310.3 853.2,306.1 851.6,305.6 849.6,309.8" fill="#dcbe27"/><polygon points="853.2,306.1 854.8,301.8 853.2,301.3 851.6,305.6" fill="#dbbd27"/><polygon points="854.8,301.8 855.9,297.4 854.3,297 853.2,301.3" fill="#dbbd27"/><polygon points="855.9,297.4 856.5,293 854.9,292.7 854.3,297" fill="#dabc26"/><polygon points="856.5,293 856.6,288.6 855,288.4 854.9,292.7" fill="#d9bc26"/><polygon points="856.6,288.6 856.2,284.2 854.6,284.1 855,288.4" fill="#d9bb26"/><polygon points="856.2,284.2 855.3,279.9 853.7,279.7 854.6,284.1" fill="#d8bb26"/><polygon points="855.3,279.9 853.9,275.6 852.3,275.5 853.7,279.7" fill="#d8bb26"/><polygon points="853.9,275.6 852,271.3 850.5,271.3 852.3,275.5" fill="#d8bb26"/><polygon points="852,271.3 849.7,267.1 848.2,267.1 850.5,271.3" fill="#d8bb26"/><polygon points="849.7,267.1 846.8,263 845.4,263 848.2,267.1" fill="#d8bb26"/><polygon points="846.8,263 843.6,259 842.1,259.1 845.4,263" fill="#d8bb26"/><polygon points="843.6,259 839.8,255.1 838.5,255.3 842.1,259.1" fill="#d9bb26"/><polygon points="839.8,255.1 835.7,251.3 834.4,251.6 838.5,255.3" fill="#d9bc26"/><polygon points="835.7,251.3 831.1,247.8 829.8,248 834.4,251.6" fill="#dabc26"/><polygon points="831.1,247.8 826.1,244.3 824.9,244.6 829.8,248" fill="#dabd27"/><polygon points="826.1,244.3 820.8,241.1 819.6,241.4 824.9,244.6" fill="#dbbd27"/><polygon points="820.8,241.1 815.1,238 814,238.4 819.6,241.4" fill="#dcbe27"/><polygon points="815.1,238 809,235.2 808,235.6 814,238.4" fill="#ddbf27"/><polygon points="809,235.2 802.7,232.5 801.8,233 808,235.6" fill="#dec027"/><polygon points="802.7,232.5 796,230.1 795.2,230.6 801.8,233" fill="#dfc127"/><polygon points="796,230.1 789.2,227.9 788.4,228.5 795.2,230.6" fill="#e1c228"/><polygon points="789.2,227.9 782,226 781.4,226.6 788.4,228.5" fill="#e2c328"/><polygon points="782,226 774.7,224.3 774.2,224.9 781.4,226.6" fill="#e3c428"/><polygon points="774.7,224.3 767.2,222.9 766.7,223.5 774.2,224.9" fill="#e5c628"/><polygon points="767.2,222.9 759.6,221.8 759.2,222.3 766.7,223.5" fill="#e6c729"/><polygon points="759.6,221.8 751.8,220.9 751.5,221.5 759.2,222.3" fill="#e8c829"/><polygon points="751.8,220.9 744,220.2 743.8,220.9 751.5,221.5" fill="#eaca29"/><polygon points="744,220.2 736.1,219.9 736,220.5 743.8,220.9" fill="#ebcb2a"/><polygon points="736.1,219.9 728.1,219.8 728.2,220.4 736,220.5" fill="#edcd2a"/><polygon points="728.1,219.8 720.2,220 720.4,220.7 728.2,220.4" fill="#efce2a"/><polygon points="720.2,220 712.4,220.5 712.6,221.1 720.4,220.7" fill="#f1d02b"/><polygon points="712.4,220.5 704.6,221.3 704.9,221.9 712.6,221.1" fill="#f2d12b"/><polygon points="704.6,221.3 696.9,222.3 697.3,222.9 704.9,221.9" fill="#f4d32b"/><polygon points="696.9,222.3 689.3,223.6 689.8,224.2 697.3,222.9" fill="#f6d42b"/><polygon points="689.3,223.6 681.9,225.2 682.5,225.7 689.8,224.2" fill="#f8d62c"/><polygon points="681.9,225.2 674.7,227 675.4,227.5 682.5,225.7" fill="#fad82c"/><polygon points="674.7,227 667.7,229 668.5,229.5 675.4,227.5" fill="#fbd92c"/><polygon points="667.7,229 661,231.3 661.8,231.8 668.5,229.5" fill="#fddb2d"/><polygon points="661,231.3 654.5,233.8 655.4,234.3 661.8,231.8" fill="#ffdc2d"/><polygon points="654.5,233.8 648.3,236.6 649.4,237 655.4,234.3" fill="#ffde2d"/><polygon points="648.3,236.6 642.5,239.5 643.6,239.9 649.4,237" fill="#ffdf2e"/><polygon points="642.5,239.5 637,242.7 638.2,243 643.6,239.9" fill="#ffe02e"/><polygon points="637,242.7 631.9,246 633.1,246.3 638.2,243" fill="#ffe22e"/><polygon points="631.9,246 627.1,249.6 628.4,249.8 633.1,246.3" fill="#ffe32e"/><polygon points="627.1,249.6 622.8,253.2 624.2,253.4 628.4,249.8" fill="#ffe42f"/><polygon points="622.8,253.2 618.9,257 620.3,257.2 624.2,253.4" fill="#ffe52f"/><polygon points="618.9,257 615.4,261 616.9,261.1 620.3,257.2" fill="#ffe72f"/><polygon points="615.4,261 612.4,265 613.9,265.1 616.9,261.1" fill="#ffe82f"/><polygon points="612.4,265 609.9,269.2 611.4,269.2 613.9,265.1" fill="#ffe830"/><polygon points="609.9,269.2 607.8,273.4 609.4,273.4 611.4,269.2" fill="#ffe930"/><polygon points="607.8,273.4 606.2,277.7 607.8,277.6 609.4,273.4" fill="#ffea30"/><polygon points="606.2,277.7 605.1,282.1 606.7,281.9 607.8,277.6" fill="#ffeb30"/><polygon points="605.1,282.1 604.5,286.5 606.1,286.3 606.7,281.9" fill="#ffeb30"/><polygon points="604.5,286.5 604.4,290.9 606,290.6 606.1,286.3" fill="#ffec30"/><polygon points="604.4,290.9 604.8,295.3 606.4,294.9 606,290.6" fill="#ffec30"/><polygon points="604.8,295.3 605.7,299.6 607.3,299.2 606.4,294.9" fill="#ffed30"/><polygon points="605.7,299.6 607.1,303.9 608.7,303.5 607.3,299.2" fill="#ffed30"/><polygon points="607.1,303.9 609,308.2 610.5,307.7 608.7,303.5" fill="#ffed30"/><polygon points="609,308.2 611.3,312.4 612.8,311.9 610.5,307.7" fill="#ffed30"/><polygon points="611.3,312.4 614.2,316.5 615.6,315.9 612.8,311.9" fill="#ffed30"/><polygon points="614.2,316.5 617.4,320.5 618.9,319.9 615.6,315.9" fill="#ffed30"/><polygon points="618.9,319.9 622.5,323.7 623.9,323.2 620.3,319.4" fill="#ffdf2e"/><polygon points="622.5,323.7 626.6,327.4 628,326.8 623.9,323.2" fill="#ffdf2e"/><polygon points="626.6,327.4 631.2,331 632.4,330.3 628,326.8" fill="#ffdf2e"/><polygon points="631.2,331 636.1,334.3 637.3,333.7 632.4,330.3" fill="#ffde2e"/><polygon points="636.1,334.3 641.4,337.6 642.5,336.8 637.3,333.7" fill="#ffde2d"/><polygon points="641.4,337.6 647,340.6 648.1,339.8 642.5,336.8" fill="#ffde2d"/><polygon points="647,340.6 653,343.4 654,342.6 648.1,339.8" fill="#ffde2d"/><polygon points="653,343.4 659.2,346 660.1,345.2 654,342.6" fill="#ffdd2d"/><polygon points="659.2,346 665.8,348.4 666.6,347.5 660.1,345.2" fill="#ffdd2d"/><polygon points="665.8,348.4 672.6,350.5 673.3,349.6 666.6,347.5" fill="#ffdd2d"/><polygon points="672.6,350.5 679.6,352.4 680.3,351.5 673.3,349.6" fill="#ffdc2d"/><polygon points="679.6,352.4 686.8,354.1 687.4,353.2 680.3,351.5" fill="#ffdc2d"/><polygon points="686.8,354.1 694.3,355.5 694.7,354.5 687.4,353.2" fill="#fedb2d"/><polygon points="694.3,355.5 701.8,356.6 702.2,355.7 694.7,354.5" fill="#fedb2d"/><polygon points="701.8,356.6 709.5,357.5 709.7,356.5 702.2,355.7" fill="#fddb2d"/><polygon points="709.5,357.5 717.2,358.1 717.4,357.1 709.7,356.5" fill="#fdda2d"/><polygon points="717.2,358.1 725,358.5 725.1,357.5 717.4,357.1" fill="#fcda2d"/><polygon points="725,358.5 732.8,358.5 732.8,357.5 725.1,357.5" fill="#fbd92c"/><polygon points="732.8,358.5 740.6,358.3 740.5,357.3 732.8,357.5" fill="#fbd92c"/><polygon points="740.6,358.3 748.4,357.8 748.2,356.9 740.5,357.3" fill="#fad82c"/><polygon points="748.4,357.8 756.1,357.1 755.8,356.1 748.2,356.9" fill="#fad82c"/><polygon points="756.1,357.1 763.7,356.1 763.3,355.1 755.8,356.1" fill="#f9d72c"/><polygon points="763.7,356.1 771.2,354.8 770.7,353.9 763.3,355.1" fill="#f8d62c"/><polygon points="771.2,354.8 778.5,353.3 777.9,352.4 770.7,353.9" fill="#f8d62c"/><polygon points="778.5,353.3 785.6,351.5 784.9,350.6 777.9,352.4" fill="#f7d52c"/><polygon points="785.6,351.5 792.5,349.5 791.7,348.6 784.9,350.6" fill="#f7d52c"/><polygon points="792.5,349.5 799.2,347.2 798.3,346.4 791.7,348.6" fill="#f6d42b"/><polygon points="799.2,347.2 805.6,344.7 804.6,343.9 798.3,346.4" fill="#f5d42b"/><polygon points="805.6,344.7 811.6,342 810.6,341.2 804.6,343.9" fill="#f5d32b"/><polygon points="811.6,342 817.4,339.1 816.3,338.3 810.6,341.2" fill="#f4d32b"/><polygon points="817.4,339.1 822.8,335.9 821.6,335.3 816.3,338.3" fill="#f4d22b"/><polygon points="822.8,335.9 827.9,332.6 826.6,332 821.6,335.3" fill="#f3d22b"/><polygon points="827.9,332.6 832.6,329.2 831.3,328.6 826.6,332" fill="#f3d22b"/><polygon points="832.6,329.2 836.8,325.6 835.5,325 831.3,328.6" fill="#f2d12b"/><polygon points="836.8,325.6 840.7,321.8 839.3,321.3 835.5,325" fill="#f2d12b"/><polygon points="840.7,321.8 844.1,317.9 842.7,317.4 839.3,321.3" fill="#f1d02b"/><polygon points="844.1,317.9 847.1,313.9 845.6,313.5 842.7,317.4" fill="#f1d02b"/><polygon points="847.1,313.9 849.6,309.8 848.1,309.4 845.6,313.5" fill="#f1d02b"/><polygon points="849.6,309.8 851.6,305.6 850.1,305.3 848.1,309.4" fill="#f0cf2a"/><polygon points="851.6,305.6 853.2,301.3 851.6,301.1 850.1,305.3" fill="#f0cf2a"/><polygon points="853.2,301.3 854.3,297 852.7,296.9 851.6,301.1" fill="#f0cf2a"/><polygon points="854.3,297 854.9,292.7 853.3,292.6 852.7,296.9" fill="#efcf2a"/><polygon points="854.9,292.7 855,288.4 853.4,288.3 853.3,292.6" fill="#efcf2a"/><polygon points="855,288.4 854.6,284.1 853,284 853.4,288.3" fill="#efce2a"/><polygon points="854.6,284.1 853.7,279.7 852.1,279.8 853,284" fill="#efce2a"/><polygon points="853.7,279.7 852.3,275.5 850.8,275.6 852.1,279.8" fill="#efce2a"/><polygon points="852.3,275.5 850.5,271.3 848.9,271.4 850.8,275.6" fill="#efce2a"/><polygon points="850.5,271.3 848.2,267.1 846.6,267.3 848.9,271.4" fill="#efce2a"/><polygon points="848.2,267.1 845.4,263 843.9,263.3 846.6,267.3" fill="#efce2a"/><polygon points="845.4,263 842.1,259.1 840.7,259.4 843.9,263.3" fill="#efce2a"/><polygon points="842.1,259.1 838.5,255.3 837.1,255.6 840.7,259.4" fill="#efce2a"/><polygon points="838.5,255.3 834.4,251.6 833,252 837.1,255.6" fill="#efcf2a"/><polygon points="834.4,251.6 829.8,248 828.6,248.5 833,252" fill="#efcf2a"/><polygon points="829.8,248 824.9,244.6 823.7,245.1 828.6,248.5" fill="#f0cf2a"/><polygon points="824.9,244.6 819.6,241.4 818.5,242 823.7,245.1" fill="#f0cf2a"/><polygon points="819.6,241.4 814,238.4 812.9,239 818.5,242" fill="#f0cf2a"/><polygon points="814,238.4 808,235.6 807,236.2 812.9,239" fill="#f1d02b"/><polygon points="808,235.6 801.8,233 800.9,233.6 807,236.2" fill="#f1d02b"/><polygon points="801.8,233 795.2,230.6 794.4,231.3 800.9,233.6" fill="#f1d02b"/><polygon points="795.2,230.6 788.4,228.5 787.7,229.2 794.4,231.3" fill="#f2d12b"/><polygon points="788.4,228.5 781.4,226.6 780.7,227.3 787.7,229.2" fill="#f2d12b"/><polygon points="781.4,226.6 774.2,224.9 773.6,225.6 780.7,227.3" fill="#f3d12b"/><polygon points="774.2,224.9 766.7,223.5 766.3,224.3 773.6,225.6" fill="#f3d22b"/><polygon points="766.7,223.5 759.2,222.3 758.8,223.1 766.3,224.3" fill="#f4d22b"/><polygon points="759.2,222.3 751.5,221.5 751.3,222.3 758.8,223.1" fill="#f4d32b"/><polygon points="751.5,221.5 743.8,220.9 743.6,221.7 751.3,222.3" fill="#f5d32b"/><polygon points="743.8,220.9 736,220.5 735.9,221.3 743.6,221.7" fill="#f5d42b"/><polygon points="736,220.5 728.2,220.4 728.2,221.3 735.9,221.3" fill="#f6d42b"/><polygon points="728.2,220.4 720.4,220.7 720.5,221.5 728.2,221.3" fill="#f6d52c"/><polygon points="720.4,220.7 712.6,221.1 712.8,221.9 720.5,221.5" fill="#f7d52c"/><polygon points="712.6,221.1 704.9,221.9 705.2,222.7 712.8,221.9" fill="#f8d62c"/><polygon points="704.9,221.9 697.3,222.9 697.7,223.7 705.2,222.7" fill="#f8d62c"/><polygon points="697.3,222.9 689.8,224.2 690.3,224.9 697.7,223.7" fill="#f9d72c"/><polygon points="689.8,224.2 682.5,225.7 683.1,226.4 690.3,224.9" fill="#fad72c"/><polygon points="682.5,225.7 675.4,227.5 676.1,228.2 683.1,226.4" fill="#fad82c"/><polygon points="675.4,227.5 668.5,229.5 669.3,230.2 676.1,228.2" fill="#fbd82c"/><polygon points="668.5,229.5 661.8,231.8 662.7,232.4 669.3,230.2" fill="#fbd92c"/><polygon points="661.8,231.8 655.4,234.3 656.4,234.9 662.7,232.4" fill="#fcda2d"/><polygon points="655.4,234.3 649.4,237 650.4,237.6 656.4,234.9" fill="#fcda2d"/><polygon points="649.4,237 643.6,239.9 644.7,240.5 650.4,237.6" fill="#fdda2d"/><polygon points="643.6,239.9 638.2,243 639.4,243.5 644.7,240.5" fill="#fedb2d"/><polygon points="638.2,243 633.1,246.3 634.4,246.8 639.4,243.5" fill="#fedb2d"/><polygon points="633.1,246.3 628.4,249.8 629.7,250.2 634.4,246.8" fill="#ffdc2d"/><polygon points="628.4,249.8 624.2,253.4 625.5,253.8 629.7,250.2" fill="#ffdc2d"/><polygon points="624.2,253.4 620.3,257.2 621.7,257.5 625.5,253.8" fill="#ffdd2d"/><polygon points="620.3,257.2 616.9,261.1 618.3,261.4 621.7,257.5" fill="#ffdd2d"/><polygon points="616.9,261.1 613.9,265.1 615.4,265.3 618.3,261.4" fill="#ffdd2d"/><polygon points="613.9,265.1 611.4,269.2 612.9,269.4 615.4,265.3" fill="#ffde2d"/><polygon points="611.4,269.2 609.4,273.4 610.9,273.5 612.9,269.4" fill="#ffde2d"/><polygon points="609.4,273.4 607.8,277.6 609.4,277.7 610.9,273.5" fill="#ffde2d"/><polygon points="607.8,277.6 606.7,281.9 608.3,281.9 609.4,277.7" fill="#ffde2e"/><polygon points="606.7,281.9 606.1,286.3 607.7,286.2 608.3,281.9" fill="#ffdf2e"/><polygon points="606.1,286.3 606,290.6 607.6,290.5 607.7,286.2" fill="#ffdf2e"/><polygon points="606,290.6 606.4,294.9 608,294.8 607.6,290.5" fill="#ffdf2e"/><polygon points="606.4,294.9 607.3,299.2 608.9,299 608,294.8" fill="#ffdf2e"/><polygon points="607.3,299.2 608.7,303.5 610.2,303.2 608.9,299" fill="#ffdf2e"/><polygon points="608.7,303.5 610.5,307.7 612.1,307.4 610.2,303.2" fill="#ffdf2e"/><polygon points="610.5,307.7 612.8,311.9 614.4,311.5 612.1,307.4" fill="#ffdf2e"/><polygon points="612.8,311.9 615.6,315.9 617.1,315.5 614.4,311.5" fill="#ffdf2e"/><polygon points="615.6,315.9 618.9,319.9 620.3,319.4 617.1,315.5" fill="#ffdf2e"/><polygon points="620.3,319.4 623.9,323.2 628,326.8 632.4,330.3 637.3,333.7 642.5,336.8 648.1,339.8 654,342.6 660.1,345.2 666.6,347.5 673.3,349.6 680.3,351.5 687.4,353.2 694.7,354.5 702.2,355.7 709.7,356.5 717.4,357.1 725.1,357.5 732.8,357.5 740.5,357.3 748.2,356.9 755.8,356.1 763.3,355.1 770.7,353.9 777.9,352.4 784.9,350.6 791.7,348.6 798.3,346.4 804.6,343.9 810.6,341.2 816.3,338.3 821.6,335.3 826.6,332 831.3,328.6 835.5,325 839.3,321.3 842.7,317.4 845.6,313.5 848.1,309.4 850.1,305.3 851.6,301.1 852.7,296.9 853.3,292.6 853.4,288.3 853,284 852.1,279.8 850.8,275.6 848.9,271.4 846.6,267.3 843.9,263.3 840.7,259.4 837.1,255.6 833,252 828.6,248.5 823.7,245.1 818.5,242 812.9,239 807,236.2 800.9,233.6 794.4,231.3 787.7,229.2 780.7,227.3 773.6,225.6 766.3,224.3 758.8,223.1 751.3,222.3 743.6,221.7 735.9,221.3 728.2,221.3 720.5,221.5 712.8,221.9 705.2,222.7 697.7,223.7 690.3,224.9 683.1,226.4 676.1,228.2 669.3,230.2 662.7,232.4 656.4,234.9 650.4,237.6 644.7,240.5 639.4,243.5 634.4,246.8 629.7,250.2 625.5,253.8 621.7,257.5 618.3,261.4 615.4,265.3 612.9,269.4 610.9,273.5 609.4,277.7 608.3,281.9 607.7,286.2 607.6,290.5 608,294.8 608.9,299 610.2,303.2 612.1,307.4 614.4,311.5 617.1,315.5" fill="#f9d72c"/><g clip-path="url(#holeclip)"><polygon points="636.8,468.4 639.9,471.6 643.4,474.7 647.2,477.6 651.3,480.5 655.7,483.2 660.4,485.7 665.4,488.1 670.7,490.3 676.2,492.3 681.9,494.1 687.8,495.7 693.9,497 700.1,498.2 706.4,499.2 712.9,499.9 719.4,500.4 725.9,500.7 732.5,500.8 739,500.6 745.5,500.2 752,499.6 758.4,498.7 764.6,497.7 770.8,496.4 776.7,494.9 782.5,493.2 788.1,491.3 793.5,489.2 798.6,486.9 803.4,484.4 808,481.8 812.2,479.1 816.1,476.2 819.7,473.1 823,469.9 825.8,466.7 828.3,463.3 830.4,459.9 832.1,456.4 833.5,452.8 834.4,449.2 834.9,445.6 834.9,441.9 834.6,438.3 833.9,434.7 832.7,431.1 831.2,427.5 829.2,424.1 826.9,420.7 824.2,417.4 821.1,414.1 817.6,411 813.8,408.1 809.7,405.2 805.3,402.5 800.6,400 795.6,397.6 790.3,395.4 784.8,393.4 779.1,391.6 773.2,390 767.1,388.7 760.9,387.5 754.6,386.5 748.1,385.8 741.6,385.3 735.1,385 728.5,384.9 722,385.1 715.5,385.5 709,386.1 702.6,387 696.4,388 690.2,389.3 684.3,390.8 678.5,392.5 672.9,394.4 667.5,396.5 662.4,398.8 657.6,401.3 653,403.9 648.8,406.6 644.9,409.5 641.3,412.6 638,415.8 635.2,419 632.7,422.4 630.6,425.8 628.9,429.3 627.5,432.9 626.6,436.5 626.1,440.1 626.1,443.8 626.4,447.4 627.1,451 628.3,454.6 629.8,458.2 631.8,461.6 634.1,465" fill="#9dcb51"/><polygon points="834.9,441.9 834.6,438.3 834.6,284.8 834.9,288.5" fill="#7b9f40"/><polygon points="834.6,438.3 833.9,434.7 833.9,281.2 834.6,284.8" fill="#7ca140"/><polygon points="833.9,434.7 832.7,431.1 832.7,277.6 833.9,281.2" fill="#7da241"/><polygon points="832.7,431.1 831.2,427.5 831.2,274.1 832.7,277.6" fill="#7da241"/><polygon points="831.2,427.5 829.2,424.1 829.2,270.6 831.2,274.1" fill="#7da241"/><polygon points="829.2,424.1 826.9,420.7 826.9,267.2 829.2,270.6" fill="#7da241"/><polygon points="826.9,420.7 824.2,417.4 824.2,263.9 826.9,267.2" fill="#7ca140"/><polygon points="824.2,417.4 821.1,414.1 821.1,260.7 824.2,263.9" fill="#7b9f40"/><polygon points="821.1,414.1 817.6,411 817.6,257.6 821.1,260.7" fill="#7a9e3f"/><polygon points="817.6,411 813.8,408.1 813.8,254.6 817.6,257.6" fill="#789b3e"/><polygon points="813.8,408.1 809.7,405.2 809.7,251.8 813.8,254.6" fill="#76983d"/><polygon points="809.7,405.2 805.3,402.5 805.3,249.1 809.7,251.8" fill="#73953c"/><polygon points="805.3,402.5 800.6,400 800.6,246.5 805.3,249.1" fill="#71923a"/><polygon points="800.6,400 795.6,397.6 795.6,244.2 800.6,246.5" fill="#6d8e38"/><polygon points="795.6,397.6 790.3,395.4 790.3,242 795.6,244.2" fill="#6a8937"/><polygon points="790.3,395.4 784.8,393.4 784.8,240 790.3,242" fill="#668435"/><polygon points="784.8,393.4 779.1,391.6 779.1,238.2 784.8,240" fill="#627f33"/><polygon points="779.1,391.6 773.2,390 773.2,236.6 779.1,238.2" fill="#5e7930"/><polygon points="773.2,390 767.1,388.7 767.1,235.2 773.2,236.6" fill="#59742e"/><polygon points="767.1,388.7 760.9,387.5 760.9,234 767.1,235.2" fill="#556d2c"/><polygon points="760.9,387.5 754.6,386.5 754.6,233.1 760.9,234" fill="#506729"/><polygon points="754.6,386.5 748.1,385.8 748.1,232.3 754.6,233.1" fill="#4a6026"/><polygon points="748.1,385.8 741.6,385.3 741.6,231.8 748.1,232.3" fill="#455924"/><polygon points="741.6,385.3 735.1,385 735.1,231.5 741.6,231.8" fill="#405221"/><polygon points="735.1,385 728.5,384.9 728.5,231.5 735.1,231.5" fill="#3a4b1e"/><polygon points="728.5,384.9 722,385.1 722,231.6 728.5,231.5" fill="#34441b"/><polygon points="722,385.1 715.5,385.5 715.5,232 722,231.6" fill="#2e3c18"/><polygon points="715.5,385.5 709,386.1 709,232.7 715.5,232" fill="#293515"/><polygon points="709,386.1 702.6,387 702.6,233.5 709,232.7" fill="#232d12"/><polygon points="702.6,387 696.4,388 696.4,234.6 702.6,233.5" fill="#222c12"/><polygon points="696.4,388 690.2,389.3 690.2,235.9 696.4,234.6" fill="#283415"/><polygon points="690.2,389.3 684.3,390.8 684.3,237.4 690.2,235.9" fill="#2e3b18"/><polygon points="684.3,390.8 678.5,392.5 678.5,239.1 684.3,237.4" fill="#34431b"/><polygon points="678.5,392.5 672.9,394.4 672.9,241 678.5,239.1" fill="#394a1e"/><polygon points="672.9,394.4 667.5,396.5 667.5,243.1 672.9,241" fill="#3f5120"/><polygon points="667.5,396.5 662.4,398.8 662.4,245.4 667.5,243.1" fill="#445823"/><polygon points="662.4,398.8 657.6,401.3 657.6,247.8 662.4,245.4" fill="#4a5f26"/><polygon points="657.6,401.3 653,403.9 653,250.4 657.6,247.8" fill="#4f6629"/><polygon points="653,403.9 648.8,406.6 648.8,253.2 653,250.4" fill="#546d2b"/><polygon points="648.8,406.6 644.9,409.5 644.9,256.1 648.8,253.2" fill="#59732e"/><polygon points="644.9,409.5 641.3,412.6 641.3,259.1 644.9,256.1" fill="#5d7930"/><polygon points="641.3,412.6 638,415.8 638,262.3 641.3,259.1" fill="#627e32"/><polygon points="638,415.8 635.2,419 635.2,265.6 638,262.3" fill="#668435"/><polygon points="635.2,419 632.7,422.4 632.7,268.9 635.2,265.6" fill="#6a8836"/><polygon points="632.7,422.4 630.6,425.8 630.6,272.4 632.7,268.9" fill="#6d8d38"/><polygon points="630.6,425.8 628.9,429.3 628.9,275.9 630.6,272.4" fill="#70913a"/><polygon points="628.9,429.3 627.5,432.9 627.5,279.5 628.9,275.9" fill="#73953b"/><polygon points="627.5,432.9 626.6,436.5 626.6,283.1 627.5,279.5" fill="#76983d"/><polygon points="626.6,436.5 626.1,440.1 626.1,286.7 626.6,283.1" fill="#789b3e"/><polygon points="626.1,440.1 626.1,443.8 626.1,290.3 626.1,286.7" fill="#7a9d3f"/></g></g><g stroke="#000" stroke-width="1" shape-rendering="crispEdges"><line x1="730.5" y1="79" x2="730.5" y2="347.4"/><line x1="730.5" y1="289.4" x2="752.5" y2="283.4" stroke-width="0.975"/><line x1="730.5" y1="187.1" x2="752.5" y2="181.1" stroke-width="0.975"/><line x1="730.5" y1="84.8" x2="752.5" y2="78.8" stroke-width="0.975"/><line x1="730.5" y1="-17.5" x2="752.5" y2="-23.5" stroke-width="0.975"/><line x1="730.5" y1="-119.8" x2="752.5" y2="-125.8" stroke-width="0.975"/></g><g font-family="'DejaVu Sans','Liberation Sans',sans-serif" font-weight="200" font-size="10" letter-spacing="0.6" fill="#000"><text transform="matrix(-0 2.43 2.755 -0.75 723.9 285.1)" text-anchor="middle">20</text><text transform="matrix(-0 2.43 2.755 -0.75 723.9 80.5)" text-anchor="middle">40</text></g><g shape-rendering="crispEdges" stroke-width="1"><line x1="203.5" y1="599.5" x2="203.5" y2="573.5" stroke="#0000ff"/><line x1="203.5" y1="599.5" x2="175" y2="607.5" stroke="#ff0000"/><line x1="203.5" y1="599.5" x2="218" y2="616.3" stroke="#00ff00"/></g><g font-family="'Liberation Sans',sans-serif" font-size="9" fill="#000"><text x="200.6" y="572">Z</text><text x="166" y="612.2">x</text><text transform="matrix(0 1 -1 0 217.4 615.5)" font-size="8">Y</text></g></svg></div>
<div id="vtoolbar" class="abs" style="left:76px;top:657px;width:1276px;height:40px"><svg class="abs" style="left:0;top:0" width="640" height="40" viewBox="76 657 640 40"><path d="M96.0 664.5 L104.7 669.5 L104.7 679.5 L96.0 684.5 L87.3 679.5 L87.3 669.5Z M96.0 674.5 L104.7 669.5 M96.0 674.5 L87.3 669.5 M96.0 674.5 L96.0 684.5" fill="none" stroke="#222" stroke-width="1.1" stroke-linejoin="round" stroke-dasharray="1.6 1.3"/><path d="M90.300 679.300l4.400 3.700-4.400 3.700M96.300 679.300l4.400 3.700-4.400 3.700" fill="none" stroke="#111" stroke-width="2.700"/><path d="M128.5 664.5 L137.2 669.5 L137.2 679.5 L128.5 684.5 L119.8 679.5 L119.8 669.5Z M128.5 674.5 L137.2 669.5 M128.5 674.5 L119.8 669.5 M128.5 674.5 L128.5 684.5" fill="none" stroke="#222" stroke-width="1.2" stroke-linejoin="round"/><path d="M125.800 678.500h6v1.300l-3 3.500 3 3.500v1.300h-6v-1.300l3-3.500-3-3.500z" fill="#222" stroke="#efefef" stroke-width=".6"/><path d="M149.5 667v19" stroke="#cfcfcf" stroke-width="1"/><path d="M150.5 667v19" stroke="#fafafa" stroke-width="1"/><path d="M288.5 667v19" stroke="#cfcfcf" stroke-width="1"/><path d="M289.5 667v19" stroke="#fafafa" stroke-width="1"/><path d="M493.5 667v19" stroke="#cfcfcf" stroke-width="1"/><path d="M494.5 667v19" stroke="#fafafa" stroke-width="1"/><path d="M566.5 667v19" stroke="#cfcfcf" stroke-width="1"/><path d="M567.5 667v19" stroke="#fafafa" stroke-width="1"/><circle cx="166.300" cy="673.300" r="4.700" fill="none" stroke="#1c1c1c" stroke-width="2.600"/><path d="M170 677.200l5 5.600" stroke="#1c1c1c" stroke-width="3.200" stroke-linecap="butt"/><path d="M159.800 669.500v-3.200h3.200M170.200 666.300h3.200v3.200M159.800 677.500v3.200h3.200M173.400 676.200v1" fill="none" stroke="#1c1c1c" stroke-width="1.800"/><circle cx="200" cy="673.700" r="4.800" fill="none" stroke="#1c1c1c" stroke-width="2.500"/><path d="M203.700 677.600l4.800 5.400" stroke="#1c1c1c" stroke-width="3.300" stroke-linecap="butt"/><path d="M197.300 673.700h5.400M200 671v5.400" stroke="#1c1c1c" stroke-width="1.300"/><circle cx="233" cy="673.700" r="4.800" fill="none" stroke="#1c1c1c" stroke-width="2.500"/><path d="M236.700 677.600l4.800 5.400" stroke="#1c1c1c" stroke-width="3.300" stroke-linecap="butt"/><path d="M230.300 673.700h5.400" stroke="#1c1c1c" stroke-width="1.300"/><path d="M262.700 670.300A7.600 7.600 0 1 1 260.600 677.600" fill="none" stroke="#1c1c1c" stroke-width="2.500"/><path d="M258.800 666.300l1.200 7.400 6.600-3z" fill="#1c1c1c"/><path d="M299.1 674.2 L302.2 667.3 L310.4 667.3 L313.5 674.2 L310.4 681.1 L302.2 681.1Z M299.1 674.2 L307.6 674.2 L310.4 667.3 M307.6 674.2 L310.4 681.1" fill="none" stroke="#222" stroke-width="1.500" stroke-linejoin="round"/><path d="M313.1 671.0 L316.7 674.2 L313.1 677.4 Z" fill="#1c1c1c"/><path d="M341.0 669.0 L347.3 672.6 L347.3 679.9 L341.0 683.6 L334.7 679.9 L334.7 672.6Z M341.0 676.3 L347.3 672.6 M341.0 676.3 L334.7 672.6 M341.0 676.3 L341.0 683.6" fill="none" stroke="#222" stroke-width="1.5" stroke-linejoin="round"/><path d="M338.200 670.300l2.800-4.600 2.800 4.600-2.800 1.500z" fill="#1c1c1c"/><path d="M372.300 666.200l7.200 2.700v8.800l-7.200 2.500-7.200-2.500v-8.800zM372.300 666.200v9.600l7.200 1.900M372.300 675.800l-7.200 1.900" fill="none" stroke="#222" stroke-width="1.500" stroke-linejoin="round"/><path d="M369.500 679.600l2.800 4.400 2.800-4.400-2.800-1.300z" fill="#1c1c1c"/><path d="M416.4 674.2 L413.3 667.3 L405.1 667.3 L402.0 674.2 L405.1 681.1 L413.3 681.1Z M416.4 674.2 L407.9 674.2 L405.1 667.3 M407.9 674.2 L405.1 681.1" fill="none" stroke="#222" stroke-width="1.500" stroke-linejoin="round"/><path d="M402.4 671.0 L398.8 674.2 L402.4 677.4 Z" fill="#1c1c1c"/><path d="M440 668l7 3.800v8.400l-7 3.800-7-3.800v-8.400z" fill="#fff" stroke="#1c1c1c" stroke-width="1.400" stroke-linejoin="round"/><path d="M433 671.800l7 3.700v8.500l-7-3.800z" fill="#1c1c1c"/><path d="M440 675.500l7-3.700M440 675.500v8.500" stroke="#1c1c1c" stroke-width="1.200"/><path d="M473 668l7 3.800v8.400l-7 3.800-7-3.800v-8.400z" fill="#fff" stroke="#1c1c1c" stroke-width="1.400" stroke-linejoin="round"/><path d="M473 668l7 3.800v8.400l-7-4.400z" fill="#1c1c1c"/><path d="M473 675.800l-7-4M473 675.800v8.200" stroke="#1c1c1c" stroke-width="1.200"/><path d="M505.500 675.500h9v8.500h-9zM505.500 675.500l17.300-8.300-8.300 8.300M514.500 684l8.300-16.800" fill="none" stroke="#1c1c1c" stroke-width="1.400" stroke-linejoin="round"/><rect x="530.5" y="661.5" width="31" height="30" rx="3" fill="#dcdcdc" stroke="#bcbcbc" stroke-width="1"/><path d="M539.300 674.700h9v8.600h-9z" fill="none" stroke="#111" stroke-width="1.700"/><path d="M544 669.800h9v8.600h-9zM539.300 674.700l4.700-4.900M548.300 674.700l4.700-4.900M539.300 683.300l4.700-4.900M548.300 683.300l4.700-4.900" fill="none" stroke="#111" stroke-width="1.100"/><rect x="570.5" y="661.5" width="31" height="30" rx="3" fill="#dcdcdc" stroke="#bcbcbc" stroke-width="1"/><path d="M585.700 666.200v9.600h11M585.700 675.800l-7.600 7" fill="none" stroke="#111" stroke-width="1.100"/><circle cx="585.700" cy="675.800" r="1.600" fill="#111"/><rect x="603.5" y="661.5" width="31" height="30" rx="3" fill="#dcdcdc" stroke="#bcbcbc" stroke-width="1"/><path d="M618.500 665.500v10h11M618.500 675.500l-7.500 7" fill="none" stroke="#111" stroke-width="1.100"/><path d="M618.500 667h2.500M618.500 670h2.500M618.500 673h2.500M621.500 675.500v-2.500M624.500 675.500v-2.500M627.500 675.500v-2.500M616.500 678.300l-1.600-1.600M614.600 680l-1.600-1.600M612.700 681.800l-1.600-1.600" stroke="#111" stroke-width="1"/><text x="620" y="684.200" font-family="'DejaVu Sans',sans-serif" font-size="8.200" fill="#333">10</text><path d="M648 670.800h8.400M648 681.200h8.400M645.900 672.800v6.400M658.400 672.800v6.400" fill="none" stroke="#333" stroke-width="1.400"/><g fill="#111"><circle cx="645.900" cy="670.800" r="1.500"/><circle cx="658.400" cy="670.800" r="1.500"/><circle cx="645.900" cy="681.200" r="1.500"/><circle cx="658.400" cy="681.200" r="1.500"/></g></svg></div>
<div id="konsole" class="abs" style="left:76px;top:697px;width:1176px;height:362px">
<span class="t" id="kt" style="left:4px;top:9px;font-size:12px">Konsole</span>
<svg class="abs" style="left:1158px;top:8px" width="13" height="13" viewBox="0 0 13 13"><rect x=".5" y="1.500" width="10" height="10" rx="2.500" fill="#f1f1f1" stroke="#666" stroke-width="1"/><path d="M3 4l5 5M8 4l-5 5" stroke="#555" stroke-width="2"/></svg>
<div class="abs" style="left:0;top:24px;width:1171px;height:337px;background:#fff;border:1px solid #adadad;border-top-color:#a3a3a3"></div>
<div class="abs" id="ktext" style="left:5px;top:30px;width:1162px;font-size:12px;line-height:15px;color:#000;white-space:pre"><div id="kl0" style="height:15px"><b>OpenSCAD 2021.01</b></div><div id="kl1" style="height:15px"><span style="color:#0000ee;text-decoration:underline">https://www.openscad.org/</span></div><div style="height:14px"></div><div id="kl3" style="height:15px">Copyright (C) 2009-2021 The OpenSCAD Developers</div><div id="kl4" style="height:15px">This program is free software; you can redistribute it and/or modify it under the terms of the GNU General Public License as published by the Free Software Foundation; either version 2 of the</div><div id="kl5" style="height:15px">License, or (at your option) any later version.</div><div style="height:14px"></div><div id="kl7" style="height:15px">Loaded design '/home/mecke/3d_drucker/scad/pipe_end_cover.scad'.</div><div id="kl8" style="height:15px">Compiling design (CSG Tree generation)...</div><div id="kl9" style="height:15px">Compiling design (CSG Products generation)...</div><div id="kl10" style="height:15px">Geometries in cache: 4</div><div id="kl11" style="height:15px">Geometry cache size in bytes: 2150720</div><div id="kl12" style="height:15px">CGAL Polyhedrons in cache: 0</div><div id="kl13" style="height:15px">CGAL cache size in bytes: 0</div><div id="kl14" style="height:15px">Compiling design (CSG Products normalization)...</div><div id="kl15" style="height:15px">Normalized tree has 2 elements!</div><div id="kl16" style="height:15px">Compile and preview finished.</div><div id="kl17" style="height:15px">Total rendering time: 0:00:02.264</div></div>
</div>
<div id="fehler" class="abs" style="left:1252px;top:697px;width:104px;height:362px">
<span class="t" id="ft" style="left:5px;top:9px;font-size:12px">Fehlerliste</span>
<svg class="abs" style="left:87px;top:8px" width="13" height="13" viewBox="0 0 13 13"><rect x=".5" y="1.500" width="10" height="10" rx="2.500" fill="#f1f1f1" stroke="#666" stroke-width="1"/><path d="M3 4l5 5M8 4l-5 5" stroke="#555" stroke-width="2"/></svg>
<div class="abs" style="left:10px;top:37px;width:11px;height:15px;overflow:hidden"><span class="t" style="left:0;top:2px;font-size:12px">An</span></div>
<div class="abs" style="left:27px;top:33px;width:10px;height:23px;border:1px solid #b3b3b3;border-radius:3px;background:linear-gradient(#fbfbfb,#ececec)"></div><div class="abs" style="left:27.500px;top:41px;width:1.500px;height:3px;background:#555"></div>
<div class="abs" style="left:10px;top:62px;width:81px;height:290px;border:1px solid #a9a9a9;background:#fff">
<div class="abs" style="left:0;top:0;width:79px;height:19px;background:linear-gradient(#fafafa,#ededed);border-bottom:1px solid #bdbdbd"></div>
<span class="t" id="fg" style="left:21.700px;top:4px;font-size:12px">Group</span>
<div class="abs" style="left:0;top:274px;width:79px;height:14px;background:#e4e4e4;border-top:1px solid #b9b9b9">
<div class="abs" style="left:0;top:0;width:14px;height:13px;background:linear-gradient(#fcfcfc,#f0f0f0);border-right:1px solid #b9b9b9"></div>
<div class="abs" style="left:14px;top:0;width:27px;height:13px;background:linear-gradient(#fdfdfd,#f1f1f1);border-right:1px solid #b9b9b9"></div>
<div class="abs" style="left:65px;top:0;width:14px;height:13px;background:linear-gradient(#fcfcfc,#f0f0f0);border-left:1px solid #b9b9b9"></div>
<svg class="abs" style="left:4px;top:2px" width="5" height="9" viewBox="0 0 5 9"><path d="M4.500 .5L.3 4.500l4.200 4z" fill="#444"/></svg>
<svg class="abs" style="left:70px;top:2px" width="5" height="9" viewBox="0 0 5 9"><path d="M.5 .5l4.200 4-4.200 4z" fill="#444"/></svg>
</div>
</div>
</div>
<div id="customizer" class="abs" style="left:1356px;top:84px;width:564px;height:975px">
<span class="t" id="ct" style="left:6px;top:4px;font-size:12px">Customizer</span>
<svg class="abs" style="left:551px;top:4px" width="13" height="13" viewBox="0 0 13 13"><rect x="1" y="1" width="10" height="10" rx="2.500" fill="#f1f1f1" stroke="#666" stroke-width="1"/><path d="M3.500 3.500l5 5M8.500 3.500l-5 5" stroke="#555" stroke-width="2"/></svg>
<div class="abs" style="left:2.500px;top:27.500px;width:13px;height:13px;border:1px solid #b3b3b3;background:#fff;border-radius:2px"></div>
<svg class="abs" style="left:3px;top:28px" width="12" height="13" viewBox="0 0 12 13"><path d="M2.400 5.400L5 10 9.600 1.600" fill="none" stroke="#000" stroke-width="2"/></svg>
<span class="t" id="c1" style="margin-top:1px;left:21px;top:28px;font-size:12px">Automatische Vorschau</span>
<div class="abs btn" style="left:189px;top:23px;width:183.500px;height:23px"></div>
<span class="t" id="c2" style="margin-top:1px;left:194px;top:28px;font-size:12px">Details anzeigen</span>
<svg class="abs" style="left:357px;top:32px" width="9" height="6" viewBox="0 0 9 6"><path d="M.5 .8h8L4.500 5.200z" fill="#444"/></svg>
<div class="abs btn" style="left:376.500px;top:23px;width:183px;height:23px"></div>
<span class="t" id="c3" style="margin-top:1px;left:427px;top:28px;font-size:12px">Zurücksetzen</span>
<div class="abs" style="left:2px;top:50px;width:196px;height:26px;border:1px solid #b3b3b3;border-radius:3px;background:linear-gradient(90deg,#fff 0,#fff 175px,#f3f3f3 175px,#f3f3f3 100%)"></div>
<div class="abs" style="left:177px;top:51px;width:1px;height:24px;background:#c4c4c4"></div>
<span class="t" id="c4" style="left:6px;top:58px;font-size:12px">Standardwerte des Designs</span>
<svg class="abs" style="left:183px;top:60px" width="9" height="6" viewBox="0 0 9 6"><path d="M.5 .8h8L4.500 5.200z" fill="#444"/></svg>
<div class="abs btn" style="left:212px;top:50px;width:40px;height:26px"></div>
<span class="t" style="left:227px;top:57px;font-size:12px">+</span>
<div class="abs btn" style="left:256px;top:50px;width:40px;height:26px"></div>
<span class="t" style="left:273px;top:57px;font-size:12px">-</span>
<div class="abs btn" style="left:300px;top:50px;width:259.500px;height:26px"></div>
<span class="t" id="c5" style="left:304px;top:55.500px;font-size:15.120px">aktuelle Voreinstellung speichern</span>
<div class="abs" style="left:2px;top:80.500px;width:557.500px;height:893px;border:1px solid #b4b4b4;border-top:none"></div>
<div class="abs" style="left:2.500px;top:81px;width:557px;height:23px;background:#dcdcdc;border:1px solid #b4b4b4;border-radius:3px"></div>
<svg class="abs" style="left:10px;top:89.500px" width="9" height="6" viewBox="0 0 9 6"><path d="M.5 .8h8L4.500 5.200z" fill="#444"/></svg>
<span class="t" id="c6" style="left:24px;top:87px;font-size:12px">Parameters</span>
<span class="t pl" id="p0" style="left:7px;top:106px">$fn</span>
<div class="abs spin" style="left:497px;top:105px"></div><div class="abs" style="left:540px;top:106px;width:1px;height:19px;background:#c4c4c4"></div>
<span class="t sv" id="v0" style="right:30px;top:110px">100</span>
<svg class="abs" style="left:542.600px;top:109px" width="9" height="13" viewBox="0 0 9 13"><path d="M.7 4.600L4.500 1 8.300 4.600zM.7 8.400L4.500 12 8.300 8.400z" fill="#555"/></svg>
<span class="t pl" id="p1" style="left:7px;top:129px">height</span>
<div class="abs spin" style="left:497px;top:128px"></div><div class="abs" style="left:540px;top:129px;width:1px;height:19px;background:#c4c4c4"></div>
<span class="t sv" id="v1" style="right:30px;top:133px">20</span>
<svg class="abs" style="left:542.600px;top:132px" width="9" height="13" viewBox="0 0 9 13"><path d="M.7 4.600L4.500 1 8.300 4.600zM.7 8.400L4.500 12 8.300 8.400z" fill="#555"/></svg>
<span class="t pl" id="p2" style="left:7px;top:152px">bottom height</span>
<div class="abs spin" style="left:497px;top:151px"></div><div class="abs" style="left:540px;top:152px;width:1px;height:19px;background:#c4c4c4"></div>
<span class="t sv" id="v2" style="right:30px;top:156px">5</span>
<svg class="abs" style="left:542.600px;top:155px" width="9" height="13" viewBox="0 0 9 13"><path d="M.7 4.600L4.500 1 8.300 4.600zM.7 8.400L4.500 12 8.300 8.400z" fill="#555"/></svg>
<span class="t pl" id="p3" style="left:7px;top:175px">radius</span>
<div class="abs spin" style="left:497px;top:174px"></div><div class="abs" style="left:540px;top:175px;width:1px;height:19px;background:#c4c4c4"></div>
<span class="t sv" id="v3" style="right:30px;top:179px">2</span>
<svg class="abs" style="left:542.600px;top:178px" width="9" height="13" viewBox="0 0 9 13"><path d="M.7 4.600L4.500 1 8.300 4.600zM.7 8.400L4.500 12 8.300 8.400z" fill="#555"/></svg>
<span class="t pl" id="p4" style="left:7px;top:198px">out diameter</span>
<div class="abs spin" style="left:497px;top:197px"></div><div class="abs" style="left:540px;top:198px;width:1px;height:19px;background:#c4c4c4"></div>
<span class="t sv" id="v4" style="right:30px;top:202px">22</span>
<svg class="abs" style="left:542.600px;top:201px" width="9" height="13" viewBox="0 0 9 13"><path d="M.7 4.600L4.500 1 8.300 4.600zM.7 8.400L4.500 12 8.300 8.400z" fill="#555"/></svg>
<span class="t pl" id="p5" style="left:7px;top:221px">in diameter</span>
<div class="abs spin" style="left:497px;top:220px"></div><div class="abs" style="left:540px;top:221px;width:1px;height:19px;background:#c4c4c4"></div>
<span class="t sv" id="v5" style="right:30px;top:225px">17</span>
<svg class="abs" style="left:542.600px;top:224px" width="9" height="13" viewBox="0 0 9 13"><path d="M.7 4.600L4.500 1 8.300 4.600zM.7 8.400L4.500 12 8.300 8.400z" fill="#555"/></svg>
</div>
<div id="statusbar" class="abs">
<span class="t" id="st1" style="left:2.300px;top:6px;font-size:12px">Ansicht: Verschiebung = [ 0.75 -1.43 11.43 ], Rotation = [ 56.40 0.00 153.80 ], Abstand = 117.02, Sichtfeld = 22.50 (1276x573)</span>
<span class="t" id="st2" style="left:1800px;top:6px;font-size:12px">OpenSCAD 2021.01</span>
</div>
<svg class="abs" style="left:0;top:0;pointer-events:none" width="1920" height="1080" viewBox="0 0 1920 1080" shape-rendering="crispEdges"><rect x="73" y="564" width="1" height="1" fill="#b2b2b2"/><rect x="74" y="565" width="1" height="1" fill="#fbfbfb"/><rect x="1355" y="564" width="1" height="1" fill="#b2b2b2"/><rect x="1356" y="565" width="1" height="1" fill="#fbfbfb"/><rect x="1250" y="873" width="1" height="1" fill="#b2b2b2"/><rect x="1251" y="874" width="1" height="1" fill="#fbfbfb"/><rect x="707" y="698" width="1" height="1" fill="#b2b2b2"/><rect x="708" y="699" width="1" height="1" fill="#fbfbfb"/><rect x="73" y="567" width="1" height="1" fill="#b2b2b2"/><rect x="74" y="568" width="1" height="1" fill="#fbfbfb"/><rect x="1355" y="567" width="1" height="1" fill="#b2b2b2"/><rect x="1356" y="568" width="1" height="1" fill="#fbfbfb"/><rect x="1250" y="876" width="1" height="1" fill="#b2b2b2"/><rect x="1251" y="877" width="1" height="1" fill="#fbfbfb"/><rect x="710" y="698" width="1" height="1" fill="#b2b2b2"/><rect x="711" y="699" width="1" height="1" fill="#fbfbfb"/><rect x="73" y="570" width="1" height="1" fill="#b2b2b2"/><rect x="74" y="571" width="1" height="1" fill="#fbfbfb"/><rect x="1355" y="570" width="1" height="1" fill="#b2b2b2"/><rect x="1356" y="571" width="1" height="1" fill="#fbfbfb"/><rect x="1250" y="879" width="1" height="1" fill="#b2b2b2"/><rect x="1251" y="880" width="1" height="1" fill="#fbfbfb"/><rect x="713" y="698" width="1" height="1" fill="#b2b2b2"/><rect x="714" y="699" width="1" height="1" fill="#fbfbfb"/><rect x="73" y="573" width="1" height="1" fill="#b2b2b2"/><rect x="74" y="574" width="1" height="1" fill="#fbfbfb"/><rect x="1355" y="573" width="1" height="1" fill="#b2b2b2"/><rect x="1356" y="574" width="1" height="1" fill="#fbfbfb"/><rect x="1250" y="882" width="1" height="1" fill="#b2b2b2"/><rect x="1251" y="883" width="1" height="1" fill="#fbfbfb"/><rect x="716" y="698" width="1" height="1" fill="#b2b2b2"/><rect x="717" y="699" width="1" height="1" fill="#fbfbfb"/><rect x="73" y="576" width="1" height="1" fill="#b2b2b2"/><rect x="74" y="577" width="1" height="1" fill="#fbfbfb"/><rect x="1355" y="576" width="1" height="1" fill="#b2b2b2"/><rect x="1356" y="577" width="1" height="1" fill="#fbfbfb"/><rect x="1250" y="885" width="1" height="1" fill="#b2b2b2"/><rect x="1251" y="886" width="1" height="1" fill="#fbfbfb"/><rect x="719" y="698" width="1" height="1" fill="#b2b2b2"/><rect x="720" y="699" width="1" height="1" fill="#fbfbfb"/><rect x="73" y="579" width="1" height="1" fill="#b2b2b2"/><rect x="74" y="580" width="1" height="1" fill="#fbfbfb"/><rect x="1355" y="579" width="1" height="1" fill="#b2b2b2"/><rect x="1356" y="580" width="1" height="1" fill="#fbfbfb"/><rect x="1250" y="888" width="1" height="1" fill="#b2b2b2"/><rect x="1251" y="889" width="1" height="1" fill="#fbfbfb"/><rect x="722" y="698" width="1" height="1" fill="#b2b2b2"/><rect x="723" y="699" width="1" height="1" fill="#fbfbfb"/></svg>
</body>
</html>
